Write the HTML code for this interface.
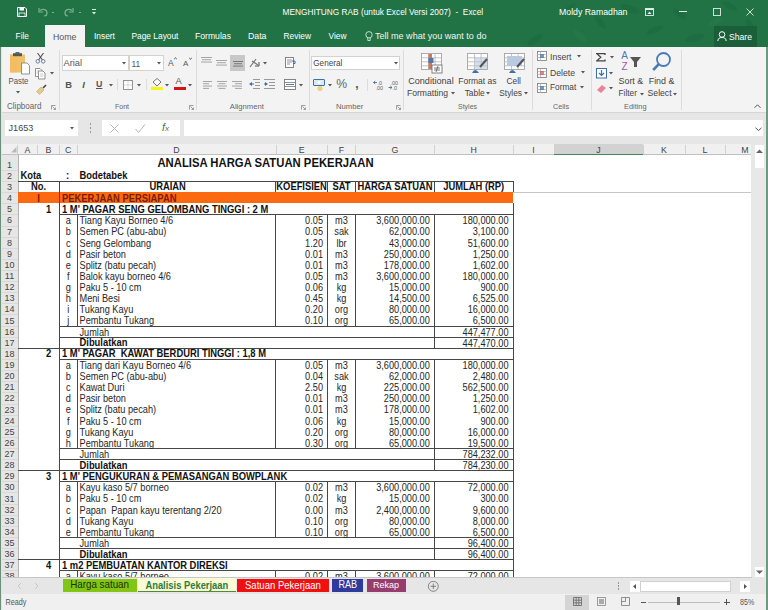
<!DOCTYPE html>
<html><head><meta charset="utf-8">
<style>
*{margin:0;padding:0;box-sizing:border-box}
html,body{width:768px;height:610px;overflow:hidden;background:#fff;font-family:"Liberation Sans",sans-serif}
.a{position:absolute;white-space:nowrap}
.rh{font-size:8.5px;color:#444;text-align:center}
#grid{position:absolute;left:0;top:155px;width:751.4px;height:422px;background:#fff;overflow:hidden}
</style></head><body>
<div class="a" style="left:0px;top:0px;width:768px;height:47px;background:#217346;"></div>
<svg class="a" style="left:480px;top:0" width="288" height="47" viewBox="0 0 288 47"><g fill="#1c6940" opacity="0.55"><ellipse cx="55" cy="40" rx="9" ry="3.5" transform="rotate(-35 55 40)"/><ellipse cx="120" cy="22" rx="8" ry="3" transform="rotate(50 120 22)"/><ellipse cx="150" cy="9" rx="10" ry="3.5" transform="rotate(20 150 9)"/><ellipse cx="175" cy="30" rx="9" ry="3" transform="rotate(-25 175 30)"/><ellipse cx="200" cy="14" rx="8" ry="3" transform="rotate(35 200 14)"/><ellipse cx="215" cy="38" rx="10" ry="3.5" transform="rotate(-15 215 38)"/><ellipse cx="250" cy="6" rx="8" ry="3" transform="rotate(30 250 6)"/><ellipse cx="270" cy="25" rx="7" ry="3" transform="rotate(60 270 25)"/><ellipse cx="90" cy="8" rx="7" ry="2.5" transform="rotate(-40 90 8)"/></g><g fill="#2c8050" opacity="0.35"><ellipse cx="100" cy="36" rx="8" ry="3" transform="rotate(40 100 36)"/><ellipse cx="235" cy="22" rx="8" ry="3" transform="rotate(-30 235 22)"/></g></svg>
<svg class="a" style="left:17px;top:6.8px" width="10" height="10" viewBox="0 0 10 10"><path d="M0.5 0.5H8L9.5 2V9.5H0.5Z" fill="none" stroke="#fff" stroke-width="1"/><rect x="2.5" y="0.5" width="4.5" height="3" fill="#fff"/><rect x="2" y="6" width="6" height="3.5" fill="none" stroke="#fff" stroke-width="0.8"/></svg>
<svg class="a" style="left:38px;top:7px" width="11" height="10" viewBox="0 0 11 10"><path d="M2 3.5C5 1.5 9 2.5 9 6C9 8 7.5 9 6 9" fill="none" stroke="#7fae93" stroke-width="1.2"/><path d="M1 1V5H5" fill="none" stroke="#7fae93" stroke-width="1.2"/></svg>
<div class="a" style="left:52px;top:12px;width:2px;height:1px;background:#7fae93"></div>
<svg class="a" style="left:63px;top:7px" width="11" height="10" viewBox="0 0 11 10"><path d="M9 3.5C6 1.5 2 2.5 2 6C2 8 3.5 9 5 9" fill="none" stroke="#7fae93" stroke-width="1.2"/><path d="M10 1V5H6" fill="none" stroke="#7fae93" stroke-width="1.2"/></svg>
<div class="a" style="left:79px;top:12px;width:2px;height:1px;background:#7fae93"></div>
<svg class="a" style="left:92px;top:9px" width="4" height="6" viewBox="0 0 4 6"><rect x="0" y="0" width="4" height="1" fill="#dfeee5"/><path d="M0 3H4L2 5.5Z" fill="#dfeee5"/></svg>
<div class="a" style="left:282.60px;top:7.45px;font-size:8.3px;line-height:8.3px;color:#fff;letter-spacing:0px;transform-origin:0 0;transform:scaleY(1.15)">MENGHITUNG RAB (untuk Excel Versi 2007)&nbsp; -&nbsp; Excel</div>
<div class="a" style="left:559.00px;top:7.40px;font-size:8.74px;line-height:8.74px;color:#fff;transform-origin:0 0;transform:scaleY(1.1)">Moldy Ramadhan</div>
<svg class="a" style="left:645px;top:7.5px" width="9" height="8" viewBox="0 0 9 8"><rect x="0.5" y="0.5" width="8" height="7" fill="none" stroke="#e8f0eb" stroke-width="0.9"/><rect x="0.5" y="0.5" width="8" height="1.5" fill="#e8f0eb"/><path d="M2.5 6H6.5L4.5 3.5Z" fill="#e8f0eb"/></svg>
<div class="a" style="left:679px;top:11px;width:8px;height:0.9px;background:#e0ebe4;"></div>
<svg class="a" style="left:712.5px;top:7.5px" width="8" height="8" viewBox="0 0 8 8"><rect x="0.5" y="0.5" width="7" height="7" fill="none" stroke="#e0ebe4" stroke-width="0.9"/></svg>
<svg class="a" style="left:746px;top:7.5px" width="8" height="8" viewBox="0 0 8 8"><path d="M0.5 0.5L7.5 7.5M7.5 0.5L0.5 7.5" stroke="#e0ebe4" stroke-width="0.9"/></svg>
<div class="a" style="left:45px;top:25px;width:40px;height:22px;background:#f3f3f3;"></div>
<div class="a" style="left:15.60px;top:31.45px;font-size:8.31px;line-height:8.31px;color:#fff;transform-origin:0 0;transform:scaleY(1.12)">File</div>
<div class="a" style="left:94.00px;top:31.44px;font-size:8.39px;line-height:8.39px;color:#fff;transform-origin:0 0;transform:scaleY(1.12)">Insert</div>
<div class="a" style="left:131.50px;top:31.44px;font-size:8.37px;line-height:8.37px;color:#fff;transform-origin:0 0;transform:scaleY(1.12)">Page Layout</div>
<div class="a" style="left:195.00px;top:31.41px;font-size:8.64px;line-height:8.64px;color:#fff;transform-origin:0 0;transform:scaleY(1.12)">Formulas</div>
<div class="a" style="left:248.00px;top:31.40px;font-size:8.76px;line-height:8.76px;color:#fff;transform-origin:0 0;transform:scaleY(1.12)">Data</div>
<div class="a" style="left:283.50px;top:31.44px;font-size:8.38px;line-height:8.38px;color:#fff;transform-origin:0 0;transform:scaleY(1.12)">Review</div>
<div class="a" style="left:328.50px;top:31.44px;font-size:8.37px;line-height:8.37px;color:#fff;transform-origin:0 0;transform:scaleY(1.12)">View</div>
<div class="a" style="left:53.00px;top:31.59px;font-size:8.81px;line-height:8.81px;color:#555;transform-origin:0 0;transform:scaleY(1.12)">Home</div>
<svg class="a" style="left:365px;top:31px" width="8" height="11" viewBox="0 0 8 11"><circle cx="4" cy="3.8" r="3.2" fill="none" stroke="#f0f5f2" stroke-width="0.8"/><path d="M2.8 7V9.5H5.2V7" fill="none" stroke="#f0f5f2" stroke-width="0.8"/></svg>
<div class="a" style="left:375.00px;top:31.86px;font-size:9.04px;line-height:9.04px;color:#f0f5f2;transform-origin:0 0;transform:scaleY(1.05)">Tell me what you want to do</div>
<div class="a" style="left:714px;top:26px;width:43px;height:21px;background:#1b5e3a;"></div>
<svg class="a" style="left:717px;top:31px" width="10" height="11" viewBox="0 0 10 11"><circle cx="5" cy="3.5" r="2.8" fill="none" stroke="#fff" stroke-width="1"/><path d="M0.8 10C1 7 3 6.5 5 6.5S9 7 9.2 10" fill="none" stroke="#fff" stroke-width="1"/></svg>
<div class="a" style="left:729.00px;top:32.01px;font-size:8.62px;line-height:8.62px;color:#fff;transform-origin:0 0;transform:scaleY(1.1)">Share</div>
<div class="a" style="left:0px;top:47px;width:768px;height:65px;background:#f3f3f3;"></div>
<div class="a" style="left:0px;top:112px;width:768px;height:1px;background:#d5d5d5;"></div>
<div class="a" style="left:58.5px;top:50px;width:1px;height:60px;background:#dcdcdc;"></div>
<div class="a" style="left:195.6px;top:50px;width:1px;height:60px;background:#dcdcdc;"></div>
<div class="a" style="left:308.6px;top:50px;width:1px;height:60px;background:#dcdcdc;"></div>
<div class="a" style="left:403px;top:50px;width:1px;height:60px;background:#dcdcdc;"></div>
<div class="a" style="left:531.5px;top:50px;width:1px;height:60px;background:#dcdcdc;"></div>
<div class="a" style="left:590.6px;top:50px;width:1px;height:60px;background:#dcdcdc;"></div>
<div class="a" style="left:681px;top:50px;width:1px;height:60px;background:#dcdcdc;"></div>
<div class="a" style="left:7.00px;top:102.58px;font-size:8.06px;line-height:8.06px;color:#666;transform-origin:0 0;transform:scaleY(1.05)">Clipboard</div>
<div class="a" style="left:115.00px;top:102.70px;font-size:7.0px;line-height:7.0px;color:#666;transform-origin:0 0;transform:scaleY(1.05)">Font</div>
<div class="a" style="left:229.80px;top:102.62px;font-size:7.65px;line-height:7.65px;color:#666;transform-origin:0 0;transform:scaleY(1.05)">Alignment</div>
<div class="a" style="left:336.00px;top:102.62px;font-size:7.67px;line-height:7.67px;color:#666;transform-origin:0 0;transform:scaleY(1.05)">Number</div>
<div class="a" style="left:458.00px;top:102.70px;font-size:7.0px;line-height:7.0px;color:#666;transform-origin:0 0;transform:scaleY(1.05)">Styles</div>
<div class="a" style="left:553.00px;top:102.68px;font-size:7.2px;line-height:7.2px;color:#666;transform-origin:0 0;transform:scaleY(1.05)">Cells</div>
<div class="a" style="left:624.00px;top:102.66px;font-size:7.36px;line-height:7.36px;color:#666;transform-origin:0 0;transform:scaleY(1.05)">Editing</div>
<svg class="a" style="left:51px;top:105px" width="5" height="5" viewBox="0 0 5 5"><path d="M0.5 0.5H4.5M0.5 0.5V4.5" stroke="#888" stroke-width="0.8" fill="none"/><path d="M1.5 1.5L4.5 4.5M2.5 4.5H4.5V2.5" stroke="#888" stroke-width="0.8" fill="none"/></svg>
<svg class="a" style="left:188.5px;top:105px" width="5" height="5" viewBox="0 0 5 5"><path d="M0.5 0.5H4.5M0.5 0.5V4.5" stroke="#888" stroke-width="0.8" fill="none"/><path d="M1.5 1.5L4.5 4.5M2.5 4.5H4.5V2.5" stroke="#888" stroke-width="0.8" fill="none"/></svg>
<svg class="a" style="left:301px;top:105px" width="5" height="5" viewBox="0 0 5 5"><path d="M0.5 0.5H4.5M0.5 0.5V4.5" stroke="#888" stroke-width="0.8" fill="none"/><path d="M1.5 1.5L4.5 4.5M2.5 4.5H4.5V2.5" stroke="#888" stroke-width="0.8" fill="none"/></svg>
<svg class="a" style="left:395.5px;top:105px" width="5" height="5" viewBox="0 0 5 5"><path d="M0.5 0.5H4.5M0.5 0.5V4.5" stroke="#888" stroke-width="0.8" fill="none"/><path d="M1.5 1.5L4.5 4.5M2.5 4.5H4.5V2.5" stroke="#888" stroke-width="0.8" fill="none"/></svg>
<svg class="a" style="left:10px;top:51.5px" width="20" height="23" viewBox="0 0 20 23"><rect x="0" y="2.5" width="15" height="18" fill="#efc26a"/><rect x="0" y="2.5" width="7" height="18" fill="#f2b95a" opacity="0.6"/><rect x="3" y="1.2" width="9" height="3" fill="#555"/><rect x="5.5" y="0" width="4" height="2" fill="#666"/><path d="M11.5 11H17L19.5 13.5V22H11.5Z" fill="#fff" stroke="#7a7a7a" stroke-width="0.8"/></svg>
<div class="a" style="left:8.50px;top:77.11px;font-size:7.8px;line-height:7.8px;color:#555;transform-origin:0 0;transform:scaleY(1.15)">Paste</div>
<svg class="a" style="left:16px;top:90.5px" width="4" height="3" viewBox="0 0 4 3"><path d="M0 0H4L2 2.5Z" fill="#555"/></svg>
<svg class="a" style="left:34.5px;top:52.5px" width="11" height="11" viewBox="0 0 11 11"><path d="M2.5 0L7.5 7M8.5 0L3.5 7" stroke="#555" stroke-width="1.1"/><circle cx="2.8" cy="8.3" r="1.8" fill="none" stroke="#6a7f99" stroke-width="1"/><circle cx="8.2" cy="8.3" r="1.8" fill="none" stroke="#6a7f99" stroke-width="1"/></svg>
<svg class="a" style="left:35px;top:67.5px" width="11" height="12" viewBox="0 0 11 12"><path d="M0.5 0.5H5L7 2.5V8.5H0.5Z" fill="#fff" stroke="#777" stroke-width="0.8"/><path d="M3.5 3H8L10 5V11H3.5Z" fill="#fff" stroke="#777" stroke-width="0.8"/><path d="M1.5 3H4M1.5 5H3M5 6H8.5M5 8H8.5" stroke="#aaa" stroke-width="0.6"/></svg>
<svg class="a" style="left:49.5px;top:72.0px" width="4" height="3" viewBox="0 0 4 3"><path d="M0 0H4L2 2.5Z" fill="#555"/></svg>
<svg class="a" style="left:35.5px;top:84px" width="12" height="11" viewBox="0 0 12 11"><path d="M7 4L10 1" stroke="#444" stroke-width="1.6"/><path d="M0.5 7.5L5 3L8 6L3.5 10.5Z" fill="#e3cb8a" stroke="#b59a50" stroke-width="0.5"/></svg>
<div class="a" style="left:61.5px;top:55px;width:67px;height:15.5px;background:#fff;border:1px solid #d2d2d2"></div>
<div class="a" style="left:128.5px;top:55px;width:35px;height:15.5px;background:#fff;border:1px solid #d2d2d2"></div>
<div class="a" style="left:63.50px;top:58.94px;font-size:9.3px;line-height:9.3px;color:#555;">Arial</div>
<div class="a" style="left:131.40px;top:59.04px;font-size:8.4px;line-height:8.4px;color:#555;transform-origin:0 0;transform:scaleY(1.08)">11</div>
<svg class="a" style="left:121.5px;top:61.5px" width="4" height="3" viewBox="0 0 4 3"><path d="M0 0H4L2 2.5Z" fill="#555"/></svg>
<svg class="a" style="left:156.5px;top:61.5px" width="4" height="3" viewBox="0 0 4 3"><path d="M0 0H4L2 2.5Z" fill="#555"/></svg>
<div class="a" style="left:168.00px;top:59.03px;font-size:8.5px;line-height:8.5px;color:#555;">A</div>
<svg class="a" style="left:174px;top:57px" width="3" height="3" viewBox="0 0 3 3"><path d="M0 2.5L1.5 0.5L3 2.5" stroke="#555" fill="none" stroke-width="0.8"/></svg>
<div class="a" style="left:183.00px;top:59.58px;font-size:8.0px;line-height:8.0px;color:#555;">A</div>
<svg class="a" style="left:188.5px;top:57px" width="3" height="3" viewBox="0 0 3 3"><path d="M0 0.5L1.5 2.5L3 0.5" stroke="#555" fill="none" stroke-width="0.8"/></svg>
<div class="a" style="left:65.30px;top:80.12px;font-size:9.4px;line-height:9.4px;color:#555;font-weight:bold;">B</div>
<div class="a" style="left:82.30px;top:80.12px;font-size:9.4px;line-height:9.4px;color:#555;font-weight:bold;font-style:italic">I</div>
<div class="a" style="left:96.00px;top:80.19px;font-size:8.8px;line-height:8.8px;color:#555;font-weight:bold;text-decoration:underline">U</div>
<svg class="a" style="left:108.7px;top:83.5px" width="4" height="3" viewBox="0 0 4 3"><path d="M0 0H4L2 2.5Z" fill="#555"/></svg>
<div class="a" style="left:117.3px;top:79px;width:1px;height:11px;background:#dcdcdc;"></div>
<svg class="a" style="left:122.5px;top:79.5px" width="10" height="10" viewBox="0 0 10 10"><rect x="0.5" y="0.5" width="9" height="9" fill="#fff" stroke="#888" stroke-width="0.9"/><path d="M5 0.5V9.5M0.5 5H9.5" stroke="#aaa" stroke-width="0.8" stroke-dasharray="1 1"/></svg>
<svg class="a" style="left:137px;top:83.5px" width="4" height="3" viewBox="0 0 4 3"><path d="M0 0H4L2 2.5Z" fill="#555"/></svg>
<div class="a" style="left:145.6px;top:79px;width:1px;height:11px;background:#dcdcdc;"></div>
<svg class="a" style="left:150.5px;top:78px" width="12" height="12" viewBox="0 0 12 12"><path d="M2 4L6 0.5L10 4L6 8Z" fill="#fff" stroke="#666" stroke-width="0.9"/><rect x="0" y="9" width="12" height="3" fill="#f5f51a"/></svg>
<svg class="a" style="left:165.3px;top:83.5px" width="4" height="3" viewBox="0 0 4 3"><path d="M0 0H4L2 2.5Z" fill="#555"/></svg>
<div class="a" style="left:175.50px;top:77.45px;font-size:9.2px;line-height:9.2px;color:#555;">A</div>
<div class="a" style="left:174px;top:87px;width:11.5px;height:3px;background:#d11616;"></div>
<svg class="a" style="left:188px;top:83.5px" width="4" height="3" viewBox="0 0 4 3"><path d="M0 0H4L2 2.5Z" fill="#555"/></svg>
<div class="a" style="left:230px;top:55.3px;width:15px;height:15.3px;background:#c8c8c8;"></div>
<svg class="a" style="left:201px;top:56.5px" width="14" height="14" viewBox="0 0 14 14"><rect x="0" y="0" width="11" height="0.9" fill="#9c9c9c"/><rect x="1" y="2.3" width="9" height="0.9" fill="#9c9c9c"/><rect x="0" y="4.6" width="11" height="0.9" fill="#9c9c9c"/></svg>
<svg class="a" style="left:216px;top:59.5px" width="14" height="14" viewBox="0 0 14 14"><rect x="0" y="0" width="11" height="0.9" fill="#9c9c9c"/><rect x="1" y="2.3" width="9" height="0.9" fill="#9c9c9c"/><rect x="0" y="4.6" width="11" height="0.9" fill="#9c9c9c"/></svg>
<svg class="a" style="left:232.5px;top:61px" width="14" height="14" viewBox="0 0 14 14"><rect x="0" y="0" width="10" height="0.9" fill="#707070"/><rect x="1" y="2.3" width="8" height="0.9" fill="#707070"/><rect x="0" y="4.6" width="10" height="0.9" fill="#707070"/></svg>
<svg class="a" style="left:202.5px;top:80.5px" width="14" height="14" viewBox="0 0 14 14"><rect x="0" y="0" width="9" height="0.9" fill="#9c9c9c"/><rect x="0" y="2.3" width="6" height="0.9" fill="#9c9c9c"/><rect x="0" y="4.6" width="9" height="0.9" fill="#9c9c9c"/><rect x="0" y="6.9" width="6" height="0.9" fill="#9c9c9c"/></svg>
<svg class="a" style="left:217px;top:80.5px" width="14" height="14" viewBox="0 0 14 14"><rect x="0" y="0" width="10" height="0.9" fill="#9c9c9c"/><rect x="1.5" y="2.3" width="7" height="0.9" fill="#9c9c9c"/><rect x="0" y="4.6" width="10" height="0.9" fill="#9c9c9c"/><rect x="1.5" y="6.9" width="7" height="0.9" fill="#9c9c9c"/></svg>
<svg class="a" style="left:232px;top:80.5px" width="14" height="14" viewBox="0 0 14 14"><rect x="0" y="0" width="10" height="0.9" fill="#9c9c9c"/><rect x="3" y="2.3" width="7" height="0.9" fill="#9c9c9c"/><rect x="0" y="4.6" width="10" height="0.9" fill="#9c9c9c"/><rect x="3" y="6.9" width="7" height="0.9" fill="#9c9c9c"/></svg>
<svg class="a" style="left:248.5px;top:58px" width="11" height="10" viewBox="0 0 11 10"><path d="M1 9L7 1M3 3L9 7" stroke="#777" stroke-width="1.2"/><path d="M6 8L10 8L10 4" stroke="#555" fill="none" stroke-width="1"/></svg>
<svg class="a" style="left:262.6px;top:61.5px" width="4" height="3" viewBox="0 0 4 3"><path d="M0 0H4L2 2.5Z" fill="#555"/></svg>
<svg class="a" style="left:284.6px;top:57px" width="11" height="11" viewBox="0 0 11 11"><rect x="0.5" y="0.5" width="8" height="10" fill="#fff" stroke="#777" stroke-width="0.9"/><path d="M2 3H7M2 5H7M2 7H5" stroke="#777" stroke-width="0.8"/><path d="M7 4H10V6.5H8" stroke="#3f6fa8" fill="none" stroke-width="1"/></svg>
<svg class="a" style="left:248.5px;top:79px" width="11" height="10" viewBox="0 0 11 10"><rect x="4" y="0" width="7" height="1" fill="#999"/><rect x="6" y="3" width="5" height="1" fill="#999"/><rect x="6" y="6" width="5" height="1" fill="#999"/><rect x="4" y="9" width="7" height="1" fill="#999"/><path d="M0 5L3 3V7Z" fill="#3f6fa8"/><rect x="2" y="4.5" width="3" height="1" fill="#3f6fa8"/></svg>
<svg class="a" style="left:263.7px;top:79px" width="11" height="10" viewBox="0 0 11 10"><rect x="0" y="0" width="11" height="1" fill="#999"/><rect x="5" y="3" width="6" height="1" fill="#999"/><rect x="5" y="6" width="6" height="1" fill="#999"/><rect x="0" y="9" width="11" height="1" fill="#999"/><path d="M4 5L1 3V7Z" fill="#3f6fa8"/><rect x="0" y="4.5" width="2" height="1" fill="#3f6fa8"/></svg>
<svg class="a" style="left:284px;top:78.5px" width="12" height="11" viewBox="0 0 12 11"><rect x="0.5" y="0.5" width="11" height="10" fill="#fff" stroke="#777" stroke-width="0.9"/><path d="M0.5 3.5H11.5M0.5 7.5H11.5" stroke="#777" stroke-width="0.8"/><path d="M2 5.5H10" stroke="#3f6fa8" stroke-width="0.9"/></svg>
<svg class="a" style="left:299px;top:83.5px" width="4" height="3" viewBox="0 0 4 3"><path d="M0 0H4L2 2.5Z" fill="#555"/></svg>
<div class="a" style="left:311.3px;top:55.7px;width:89px;height:14.5px;background:#fff;border:1px solid #d2d2d2"></div>
<div class="a" style="left:313.30px;top:59.07px;font-size:8.15px;line-height:8.15px;color:#444;transform-origin:0 0;transform:scaleY(1.12)">General</div>
<svg class="a" style="left:393.5px;top:61.5px" width="4" height="3" viewBox="0 0 4 3"><path d="M0 0H4L2 2.5Z" fill="#555"/></svg>
<svg class="a" style="left:313px;top:79px" width="12" height="12" viewBox="0 0 12 12"><rect x="0.5" y="0.5" width="11" height="6" rx="0.5" fill="#dfe8f3" stroke="#3f6fa8" stroke-width="1"/><circle cx="6" cy="3.5" r="1.6" fill="#fff"/><circle cx="7" cy="9.5" r="2.6" fill="#ecd08a"/></svg>
<svg class="a" style="left:327.7px;top:83.5px" width="4" height="3" viewBox="0 0 4 3"><path d="M0 0H4L2 2.5Z" fill="#555"/></svg>
<div class="a" style="left:336.20px;top:78.20px;font-size:12.2px;line-height:12.2px;color:#666;">%</div>
<div class="a" style="left:355.20px;top:77.63px;font-size:12px;line-height:12px;color:#555;font-weight:bold;">,</div>
<div class="a" style="left:367.2px;top:79px;width:1px;height:12px;background:#dcdcdc;"></div>
<svg class="a" style="left:372.6px;top:79.5px" width="11" height="11" viewBox="0 0 11 11"><path d="M0.5 2.5H4M0.5 2.5L2.2 1M0.5 2.5L2.2 4" stroke="#3f6fa8" stroke-width="0.9" fill="none"/><text x="4.5" y="4.8" font-size="5.5" font-family="Liberation Sans" fill="#666">.0</text><text x="2.5" y="10" font-size="5.5" font-family="Liberation Sans" fill="#666">.00</text></svg>
<svg class="a" style="left:388.3px;top:79.5px" width="11" height="11" viewBox="0 0 11 11"><text x="2.5" y="4.8" font-size="5.5" font-family="Liberation Sans" fill="#666">.00</text><path d="M0.5 7.5H4M4 7.5L2.3 6M4 7.5L2.3 9" stroke="#3f6fa8" stroke-width="0.9" fill="none"/><text x="4.5" y="10" font-size="5.5" font-family="Liberation Sans" fill="#666">.0</text></svg>
<svg class="a" style="left:421px;top:53px" width="22" height="21" viewBox="0 0 22 21"><rect x="0.5" y="0.5" width="20" height="16" fill="#fff" stroke="#9a9a9a" stroke-width="0.8"/><rect x="0.5" y="4.5" width="20" height="0.7" fill="#aaa"/><rect x="0.5" y="8.5" width="20" height="0.7" fill="#aaa"/><rect x="0.5" y="12.5" width="20" height="0.7" fill="#aaa"/><rect x="7.1" y="0.5" width="0.7" height="16" fill="#aaa"/><rect x="13.7" y="0.5" width="0.7" height="16" fill="#aaa"/><rect x="7.5" y="1" width="3.5" height="15" fill="#c87a5a"/><rect x="7.5" y="5" width="5" height="5" fill="#4f78b0"/><rect x="11" y="12" width="10" height="8" fill="#fff" stroke="#777" stroke-width="0.9"/><path d="M13 15H19M13 17H19M17 13L15 19" stroke="#555" stroke-width="0.8"/></svg>
<svg class="a" style="left:467.4px;top:53px" width="22" height="21" viewBox="0 0 22 21"><rect x="0.5" y="0.5" width="20" height="16" fill="#fff" stroke="#9a9a9a" stroke-width="0.8"/><rect x="0.5" y="4.5" width="20" height="0.7" fill="#aaa"/><rect x="0.5" y="8.5" width="20" height="0.7" fill="#aaa"/><rect x="0.5" y="12.5" width="20" height="0.7" fill="#aaa"/><rect x="7.1" y="0.5" width="0.7" height="16" fill="#aaa"/><rect x="13.7" y="0.5" width="0.7" height="16" fill="#aaa"/><rect x="7" y="5" width="13" height="11" fill="#b8c9e0" opacity="0.6"/><path d="M5 20Q8 14 12 20Z" fill="#3f6fa8"/><path d="M13 14L20 6" stroke="#555" stroke-width="2"/></svg>
<svg class="a" style="left:503.5px;top:53px" width="22" height="21" viewBox="0 0 22 21"><rect x="0.5" y="0.5" width="20" height="16" fill="#fff" stroke="#9a9a9a" stroke-width="0.8"/><rect x="0.5" y="4.5" width="20" height="0.7" fill="#aaa"/><rect x="0.5" y="8.5" width="20" height="0.7" fill="#aaa"/><rect x="0.5" y="12.5" width="20" height="0.7" fill="#aaa"/><rect x="7.1" y="0.5" width="0.7" height="16" fill="#aaa"/><rect x="13.7" y="0.5" width="0.7" height="16" fill="#aaa"/><rect x="3" y="3" width="15" height="10" fill="#b8c9e0"/><path d="M5 20Q8 14 12 20Z" fill="#3f6fa8"/><path d="M13 14L20 6" stroke="#555" stroke-width="2"/></svg>
<div class="a" style="left:408.20px;top:76.96px;font-size:9.1px;line-height:9.1px;color:#444;transform-origin:0 0;transform:scaleY(1.0)">Conditional</div>
<div class="a" style="left:407.00px;top:88.72px;font-size:8.58px;line-height:8.58px;color:#444;">Formatting</div>
<svg class="a" style="left:451px;top:92.0px" width="4" height="3" viewBox="0 0 4 3"><path d="M0 0H4L2 2.5Z" fill="#555"/></svg>
<div class="a" style="left:458.30px;top:77.03px;font-size:8.49px;line-height:8.49px;color:#444;">Format as</div>
<div class="a" style="left:464.70px;top:88.74px;font-size:8.37px;line-height:8.37px;color:#444;">Table</div>
<svg class="a" style="left:486px;top:92.0px" width="4" height="3" viewBox="0 0 4 3"><path d="M0 0H4L2 2.5Z" fill="#555"/></svg>
<div class="a" style="left:506.60px;top:77.04px;font-size:8.36px;line-height:8.36px;color:#444;">Cell</div>
<div class="a" style="left:499.30px;top:88.75px;font-size:8.3px;line-height:8.3px;color:#444;">Styles</div>
<svg class="a" style="left:523.5px;top:92.0px" width="4" height="3" viewBox="0 0 4 3"><path d="M0 0H4L2 2.5Z" fill="#555"/></svg>
<svg class="a" style="left:537px;top:51.4px" width="11" height="10" viewBox="0 0 11 10"><rect x="0.5" y="0.5" width="9" height="9" fill="#fff" stroke="#888" stroke-width="0.9"/><path d="M0.5 3.5H9.5M0.5 6.5H9.5M3.5 0.5V9.5" stroke="#aaa" stroke-width="0.7"/><rect x="3" y="3" width="4" height="4" fill="#3f6fa8" opacity="0.7"/></svg>
<div class="a" style="left:550.00px;top:52.02px;font-size:8.59px;line-height:8.59px;color:#444;transform-origin:0 0;transform:scaleY(1.1)">Insert</div>
<svg class="a" style="left:576.8px;top:54.9px" width="4" height="3" viewBox="0 0 4 3"><path d="M0 0H4L2 2.5Z" fill="#555"/></svg>
<svg class="a" style="left:537px;top:67.5px" width="11" height="10" viewBox="0 0 11 10"><rect x="0.5" y="0.5" width="9" height="9" fill="#fff" stroke="#888" stroke-width="0.9"/><path d="M0.5 3.5H9.5M0.5 6.5H9.5M3.5 0.5V9.5" stroke="#aaa" stroke-width="0.7"/><rect x="3" y="3" width="4" height="4" fill="#d9534f" opacity="0.7"/></svg>
<div class="a" style="left:550.00px;top:68.11px;font-size:8.68px;line-height:8.68px;color:#444;transform-origin:0 0;transform:scaleY(1.1)">Delete</div>
<svg class="a" style="left:581px;top:71.0px" width="4" height="3" viewBox="0 0 4 3"><path d="M0 0H4L2 2.5Z" fill="#555"/></svg>
<svg class="a" style="left:537px;top:82.6px" width="11" height="10" viewBox="0 0 11 10"><rect x="0.5" y="0.5" width="9" height="9" fill="#fff" stroke="#888" stroke-width="0.9"/><path d="M0.5 3.5H9.5M0.5 6.5H9.5M3.5 0.5V9.5" stroke="#aaa" stroke-width="0.7"/><rect x="3" y="3" width="4" height="4" fill="#3f6fa8" opacity="0.7"/></svg>
<div class="a" style="left:550.00px;top:83.25px;font-size:8.27px;line-height:8.27px;color:#444;transform-origin:0 0;transform:scaleY(1.1)">Format</div>
<svg class="a" style="left:580px;top:86.1px" width="4" height="3" viewBox="0 0 4 3"><path d="M0 0H4L2 2.5Z" fill="#555"/></svg>
<svg class="a" style="left:596px;top:53.3px" width="10" height="9" viewBox="0 0 10 9"><path d="M9 2V0.7H0.8L4.8 4.2L0.8 7.8H9V6.5" stroke="#444" stroke-width="1.3" fill="none"/></svg>
<svg class="a" style="left:610px;top:56.0px" width="4" height="3" viewBox="0 0 4 3"><path d="M0 0H4L2 2.5Z" fill="#555"/></svg>
<svg class="a" style="left:595.5px;top:67.5px" width="11" height="11" viewBox="0 0 11 11"><rect x="0.5" y="0.5" width="10" height="9.5" fill="#fff" stroke="#3f6fa8" stroke-width="1"/><path d="M5.5 2V7M3 5L5.5 7.5L8 5" stroke="#3f6fa8" stroke-width="1.2" fill="none"/></svg>
<svg class="a" style="left:609px;top:71.5px" width="4" height="3" viewBox="0 0 4 3"><path d="M0 0H4L2 2.5Z" fill="#555"/></svg>
<svg class="a" style="left:596px;top:82.6px" width="11" height="11" viewBox="0 0 11 11"><path d="M1 7L6 2L10 5L5 10Z" fill="#e8849a"/></svg>
<svg class="a" style="left:609px;top:86.5px" width="4" height="3" viewBox="0 0 4 3"><path d="M0 0H4L2 2.5Z" fill="#555"/></svg>
<div class="a" style="left:621.30px;top:51.15px;font-size:10px;line-height:10px;color:#4a7ab5;">A</div>
<div class="a" style="left:621.50px;top:62.05px;font-size:10px;line-height:10px;color:#9b5aa8;">Z</div>
<svg class="a" style="left:630.4px;top:56.7px" width="11" height="10" viewBox="0 0 11 10"><path d="M0 0H11L7 5V10H4V5Z" fill="#555"/></svg>
<svg class="a" style="left:651.5px;top:52px" width="19" height="19" viewBox="0 0 19 19"><circle cx="11.5" cy="7.5" r="6.5" fill="none" stroke="#4a7ab5" stroke-width="1.8"/><path d="M6.8 12.2L1.2 18" stroke="#4a7ab5" stroke-width="2.6"/></svg>
<div class="a" style="left:618.50px;top:76.98px;font-size:8.92px;line-height:8.92px;color:#444;">Sort &amp;</div>
<div class="a" style="left:618.50px;top:89.05px;font-size:8.3px;line-height:8.3px;color:#444;">Filter</div>
<svg class="a" style="left:640px;top:92.5px" width="4" height="3" viewBox="0 0 4 3"><path d="M0 0H4L2 2.5Z" fill="#555"/></svg>
<div class="a" style="left:648.70px;top:76.98px;font-size:8.93px;line-height:8.93px;color:#444;">Find &amp;</div>
<div class="a" style="left:647.60px;top:89.01px;font-size:8.63px;line-height:8.63px;color:#444;">Select</div>
<svg class="a" style="left:672.5px;top:92.5px" width="4" height="3" viewBox="0 0 4 3"><path d="M0 0H4L2 2.5Z" fill="#555"/></svg>
<svg class="a" style="left:754px;top:103.8px" width="7" height="5" viewBox="0 0 7 5"><path d="M0.5 3.8L3.5 0.8L6.5 3.8" stroke="#555" fill="none" stroke-width="1"/></svg>
<div class="a" style="left:0px;top:113px;width:768px;height:31px;background:#e6e6e6;"></div>
<div class="a" style="left:5.2px;top:119.7px;width:73px;height:16px;background:#fff;"></div>
<div class="a" style="left:8.60px;top:124.46px;font-size:9.06px;line-height:9.06px;color:#444;">J1653</div>
<svg class="a" style="left:69.6px;top:126.5px" width="4" height="3" viewBox="0 0 4 3"><path d="M0 0H4L2 2.5Z" fill="#555"/></svg>
<div class="a" style="left:89.5px;top:123px;width:1px;height:1.5px;background:#999;"></div>
<div class="a" style="left:89.5px;top:127px;width:1px;height:1.5px;background:#999;"></div>
<div class="a" style="left:89.5px;top:131px;width:1px;height:1.5px;background:#999;"></div>
<div class="a" style="left:101.6px;top:119.7px;width:78px;height:16px;background:#fff;"></div>
<svg class="a" style="left:109.5px;top:124px" width="9" height="9" viewBox="0 0 9 9"><path d="M0.5 0.5L8.5 8.5M8.5 0.5L0.5 8.5" stroke="#b5b5b5" stroke-width="1"/></svg>
<svg class="a" style="left:135.4px;top:124px" width="11" height="9" viewBox="0 0 11 9"><path d="M0.5 5L3.5 8.5L10 0.5" stroke="#b5b5b5" stroke-width="1" fill="none"/></svg>
<div class="a" style="left:162.00px;top:122.24px;font-size:11px;line-height:11px;color:#666;font-family:"Liberation Serif",serif"><i>f<span style="font-size:8px">x</span></i></div>
<div class="a" style="left:183.6px;top:119.7px;width:579px;height:16px;background:#fff;"></div>
<svg class="a" style="left:754.5px;top:126.5px" width="7" height="5" viewBox="0 0 7 5"><path d="M0.5 0.8L3.5 3.5L6.5 0.8" stroke="#555" fill="none" stroke-width="1"/></svg>
<div class="a" style="left:1.5px;top:144px;width:750px;height:10.5px;background:#f0f0f0;"></div>
<div class="a" style="left:1.5px;top:154.3px;width:750px;height:1px;background:#c0c0c0;"></div>
<svg class="a" style="left:10.5px;top:146.8px" width="6" height="6" viewBox="0 0 6 6"><path d="M5.5 0V5.5H0Z" fill="#b9b9b9"/></svg>
<div class="a" style="left:554px;top:144px;width:89px;height:10.5px;background:#d2d2d2;"></div>
<div class="a" style="left:554px;top:153.6px;width:89px;height:1.2px;background:#3f8a5c;"></div>
<div class="a" style="left:37.0px;top:145px;width:1px;height:9px;background:#d0d0d0;"></div>
<div class="a" style="left:-32.50px;width:120px;text-align:center;top:145.19px;font-size:8.8px;line-height:8.8px;color:#444;transform-origin:50% 0;transform:scaleY(1.08)">A</div>
<div class="a" style="left:59.0px;top:145px;width:1px;height:9px;background:#d0d0d0;"></div>
<div class="a" style="left:-11.50px;width:120px;text-align:center;top:145.19px;font-size:8.8px;line-height:8.8px;color:#444;transform-origin:50% 0;transform:scaleY(1.08)">B</div>
<div class="a" style="left:76.5px;top:145px;width:1px;height:9px;background:#d0d0d0;"></div>
<div class="a" style="left:8.25px;width:120px;text-align:center;top:145.19px;font-size:8.8px;line-height:8.8px;color:#444;transform-origin:50% 0;transform:scaleY(1.08)">C</div>
<div class="a" style="left:275.5px;top:145px;width:1px;height:9px;background:#d0d0d0;"></div>
<div class="a" style="left:116.50px;width:120px;text-align:center;top:145.19px;font-size:8.8px;line-height:8.8px;color:#444;transform-origin:50% 0;transform:scaleY(1.08)">D</div>
<div class="a" style="left:327.0px;top:145px;width:1px;height:9px;background:#d0d0d0;"></div>
<div class="a" style="left:241.75px;width:120px;text-align:center;top:145.19px;font-size:8.8px;line-height:8.8px;color:#444;transform-origin:50% 0;transform:scaleY(1.08)">E</div>
<div class="a" style="left:355.0px;top:145px;width:1px;height:9px;background:#d0d0d0;"></div>
<div class="a" style="left:281.50px;width:120px;text-align:center;top:145.19px;font-size:8.8px;line-height:8.8px;color:#444;transform-origin:50% 0;transform:scaleY(1.08)">F</div>
<div class="a" style="left:434.0px;top:145px;width:1px;height:9px;background:#d0d0d0;"></div>
<div class="a" style="left:335.00px;width:120px;text-align:center;top:145.19px;font-size:8.8px;line-height:8.8px;color:#444;transform-origin:50% 0;transform:scaleY(1.08)">G</div>
<div class="a" style="left:512.5px;top:145px;width:1px;height:9px;background:#d0d0d0;"></div>
<div class="a" style="left:413.75px;width:120px;text-align:center;top:145.19px;font-size:8.8px;line-height:8.8px;color:#444;transform-origin:50% 0;transform:scaleY(1.08)">H</div>
<div class="a" style="left:553.5px;top:145px;width:1px;height:9px;background:#d0d0d0;"></div>
<div class="a" style="left:473.50px;width:120px;text-align:center;top:145.19px;font-size:8.8px;line-height:8.8px;color:#444;transform-origin:50% 0;transform:scaleY(1.08)">I</div>
<div class="a" style="left:642.5px;top:145px;width:1px;height:9px;background:#d0d0d0;"></div>
<div class="a" style="left:538.50px;width:120px;text-align:center;top:145.19px;font-size:8.8px;line-height:8.8px;color:#444;transform-origin:50% 0;transform:scaleY(1.08)">J</div>
<div class="a" style="left:684.5px;top:145px;width:1px;height:9px;background:#d0d0d0;"></div>
<div class="a" style="left:604.00px;width:120px;text-align:center;top:145.19px;font-size:8.8px;line-height:8.8px;color:#444;transform-origin:50% 0;transform:scaleY(1.08)">K</div>
<div class="a" style="left:724.5px;top:145px;width:1px;height:9px;background:#d0d0d0;"></div>
<div class="a" style="left:645.00px;width:120px;text-align:center;top:145.19px;font-size:8.8px;line-height:8.8px;color:#444;transform-origin:50% 0;transform:scaleY(1.08)">L</div>
<div class="a" style="left:764.5px;top:145px;width:1px;height:9px;background:#d0d0d0;"></div>
<div class="a" style="left:685.00px;width:120px;text-align:center;top:145.19px;font-size:8.8px;line-height:8.8px;color:#444;transform-origin:50% 0;transform:scaleY(1.08)">M</div>
<div class="a" style="left:17px;top:145px;width:1px;height:9px;background:#d0d0d0;"></div>
<div class="a" style="left:751.4px;top:144px;width:14.6px;height:433px;background:#e8e8e8;"></div>
<div class="a" style="left:754.6px;top:145.4px;width:9.4px;height:10.6px;background:#fff;"></div>
<svg class="a" style="left:755.8px;top:148.5px" width="7" height="5" viewBox="0 0 7 5"><path d="M0 4H7L3.5 0.5Z" fill="#666"/></svg>
<div class="a" style="left:754.6px;top:156.4px;width:9.4px;height:11.6px;background:#fff;"></div>
<div class="a" style="left:754.6px;top:566.5px;width:9.4px;height:10px;background:#fff;"></div>
<svg class="a" style="left:755.8px;top:569.5px" width="7" height="5" viewBox="0 0 7 5"><path d="M0 0.5H7L3.5 4Z" fill="#666"/></svg>
<div class="a" style="left:1.5px;top:577px;width:765px;height:17px;background:#e6e6e6;"></div>
<div class="a" style="left:1.5px;top:577px;width:750px;height:0.8px;background:#c6c6c6;"></div>
<svg class="a" style="left:18px;top:582.5px" width="4" height="7" viewBox="0 0 4 7"><path d="M3 0L0 3L3 6" stroke="#c4c4c4" fill="none" stroke-width="0.9"/></svg>
<svg class="a" style="left:34.5px;top:582.5px" width="4" height="7" viewBox="0 0 4 7"><path d="M0 0L3 3L0 6" stroke="#c4c4c4" fill="none" stroke-width="0.9"/></svg>
<div class="a" style="left:62.6px;top:578.7px;width:74.6px;height:12.9px;background:#84c414;"></div>
<div class="a" style="left:70.20px;top:579.68px;font-size:9.8px;line-height:9.8px;color:#1a3300;transform-origin:0 0;transform:scaleY(1.05)">Harga satuan</div>
<div class="a" style="left:137.8px;top:577.5px;width:98.5px;height:14px;background:#fbfbd6;"></div>
<div class="a" style="left:137.8px;top:590.5px;width:98.5px;height:1.5px;background:#4d8a3d;"></div>
<div class="a" style="left:145.40px;top:579.92px;font-size:9.39px;line-height:9.39px;color:#2e7a3c;font-weight:bold;transform-origin:0 0;transform:scaleY(1.1)">Analisis Pekerjaan</div>
<div class="a" style="left:236.6px;top:579px;width:92.2px;height:12.6px;background:#ee1111;"></div>
<div class="a" style="left:245.00px;top:580.41px;font-size:9.56px;line-height:9.56px;color:#fff;transform-origin:0 0;transform:scaleY(1.1)">Satuan Pekerjaan</div>
<div class="a" style="left:332.4px;top:579px;width:30.8px;height:12.6px;background:#2e3a9c;"></div>
<div class="a" style="left:338.40px;top:580.45px;font-size:9.14px;line-height:9.14px;color:#fff;transform-origin:0 0;transform:scaleY(1.1)">RAB</div>
<div class="a" style="left:366.8px;top:579px;width:39.2px;height:12.6px;background:#963d6e;"></div>
<div class="a" style="left:373.00px;top:580.47px;font-size:8.99px;line-height:8.99px;color:#fff;transform-origin:0 0;transform:scaleY(1.1)">Rekap</div>
<svg class="a" style="left:427px;top:580.5px" width="13" height="11" viewBox="0 0 13 11"><circle cx="6.3" cy="5.3" r="5" fill="none" stroke="#777" stroke-width="0.9"/><path d="M6.3 2.5V8M3.5 5.3H9" stroke="#777" stroke-width="0.9"/></svg>
<div class="a" style="left:618.3px;top:582px;width:1px;height:1.5px;background:#999;"></div>
<div class="a" style="left:618.3px;top:585px;width:1px;height:1.5px;background:#999;"></div>
<div class="a" style="left:618.3px;top:588px;width:1px;height:1.5px;background:#999;"></div>
<div class="a" style="left:629.5px;top:580.5px;width:10px;height:11.5px;background:#fff;"></div>
<svg class="a" style="left:633px;top:583.5px" width="3" height="5" viewBox="0 0 3 5"><path d="M3 0L0 2.5L3 5Z" fill="#555"/></svg>
<div class="a" style="left:639.5px;top:580.5px;width:91px;height:11.5px;background:#fff;border:0.5px solid #d0d0d0"></div>
<div class="a" style="left:740px;top:580.5px;width:10px;height:11.5px;background:#fff;"></div>
<svg class="a" style="left:744px;top:583.5px" width="3" height="5" viewBox="0 0 3 5"><path d="M0 0L3 2.5L0 5Z" fill="#555"/></svg>
<div class="a" style="left:1.5px;top:594px;width:765px;height:16px;background:#f0f0f0;"></div>
<div class="a" style="left:5.60px;top:598.88px;font-size:7.16px;line-height:7.16px;color:#555;transform-origin:0 0;transform:scaleY(1.15)">Ready</div>
<div class="a" style="left:565px;top:594.5px;width:24px;height:15.5px;background:#d4d4d4;"></div>
<svg class="a" style="left:572.5px;top:597px" width="9" height="9" viewBox="0 0 9 9"><path d="M0.5 0.5H8.5V8.5H0.5ZM3.2 0.5V8.5M5.8 0.5V8.5M0.5 3.2H8.5M0.5 5.8H8.5" stroke="#666" fill="none" stroke-width="0.8"/></svg>
<svg class="a" style="left:596.5px;top:597px" width="9" height="9" viewBox="0 0 9 9"><rect x="0.5" y="0.5" width="8" height="8" fill="none" stroke="#888" stroke-width="0.8"/><rect x="2" y="2" width="5" height="5" fill="#aaa"/></svg>
<svg class="a" style="left:620.8px;top:597px" width="9" height="9" viewBox="0 0 9 9"><path d="M0.5 0.5H8.5V8.5H0.5ZM0.5 4.5H4.5V0.5" stroke="#777" fill="none" stroke-width="0.8"/></svg>
<div class="a" style="left:640.5px;top:601.5px;width:5.5px;height:1px;background:#555;"></div>
<div class="a" style="left:648px;top:601.5px;width:72px;height:1px;background:#bdbdbd;"></div>
<div class="a" style="left:677px;top:597px;width:3px;height:8px;background:#555;"></div>
<div class="a" style="left:723.6px;top:601.5px;width:6.5px;height:1px;background:#555;"></div>
<div class="a" style="left:726.3px;top:598.8px;width:1px;height:6.5px;background:#555;"></div>
<div class="a" style="left:740.00px;top:598.88px;font-size:7.14px;line-height:7.14px;color:#555;transform-origin:0 0;transform:scaleY(1.15)">85%</div>
<div class="a" style="left:765.6px;top:47px;width:2.4px;height:563px;background:#6e9a7e;"></div>
<div id="grid">
<div class="a" style="left:1.5px;top:0;width:16px;height:422px;background:#e6e6e6"></div>
<div class="a" style="left:17.6px;top:0;width:1px;height:422px;background:#b4b4b4"></div>
<div class="a rh" style="left:1.5px;top:5.80px;width:16px;height:9.0px;line-height:9.0px;font-size:9.0px;transform-origin:0 7.47px;transform:scaleY(1.0)">1</div>
<div class="a" style="left:1.5px;top:15px;width:16px;height:1px;background:#d8d8d8"></div>
<div class="a rh" style="left:1.5px;top:16.93px;width:16px;height:9.0px;line-height:9.0px;font-size:9.0px;transform-origin:0 7.47px;transform:scaleY(1.0)">2</div>
<div class="a" style="left:1.5px;top:26px;width:16px;height:1px;background:#d8d8d8"></div>
<div class="a rh" style="left:1.5px;top:28.05px;width:16px;height:9.0px;line-height:9.0px;font-size:9.0px;transform-origin:0 7.47px;transform:scaleY(1.0)">3</div>
<div class="a" style="left:1.5px;top:37px;width:16px;height:1px;background:#d8d8d8"></div>
<div class="a rh" style="left:1.5px;top:39.18px;width:16px;height:9.0px;line-height:9.0px;font-size:9.0px;transform-origin:0 7.47px;transform:scaleY(1.0)">4</div>
<div class="a" style="left:1.5px;top:48px;width:16px;height:1px;background:#d8d8d8"></div>
<div class="a rh" style="left:1.5px;top:50.30px;width:16px;height:9.0px;line-height:9.0px;font-size:9.0px;transform-origin:0 7.47px;transform:scaleY(1.0)">5</div>
<div class="a" style="left:1.5px;top:59px;width:16px;height:1px;background:#d8d8d8"></div>
<div class="a rh" style="left:1.5px;top:61.43px;width:16px;height:9.0px;line-height:9.0px;font-size:9.0px;transform-origin:0 7.47px;transform:scaleY(1.0)">6</div>
<div class="a" style="left:1.5px;top:71px;width:16px;height:1px;background:#d8d8d8"></div>
<div class="a rh" style="left:1.5px;top:72.55px;width:16px;height:9.0px;line-height:9.0px;font-size:9.0px;transform-origin:0 7.47px;transform:scaleY(1.0)">7</div>
<div class="a" style="left:1.5px;top:82px;width:16px;height:1px;background:#d8d8d8"></div>
<div class="a rh" style="left:1.5px;top:83.68px;width:16px;height:9.0px;line-height:9.0px;font-size:9.0px;transform-origin:0 7.47px;transform:scaleY(1.0)">8</div>
<div class="a" style="left:1.5px;top:93px;width:16px;height:1px;background:#d8d8d8"></div>
<div class="a rh" style="left:1.5px;top:94.80px;width:16px;height:9.0px;line-height:9.0px;font-size:9.0px;transform-origin:0 7.47px;transform:scaleY(1.0)">9</div>
<div class="a" style="left:1.5px;top:104px;width:16px;height:1px;background:#d8d8d8"></div>
<div class="a rh" style="left:1.5px;top:105.93px;width:16px;height:9.0px;line-height:9.0px;font-size:9.0px;transform-origin:0 7.47px;transform:scaleY(1.0)">10</div>
<div class="a" style="left:1.5px;top:115px;width:16px;height:1px;background:#d8d8d8"></div>
<div class="a rh" style="left:1.5px;top:117.05px;width:16px;height:9.0px;line-height:9.0px;font-size:9.0px;transform-origin:0 7.47px;transform:scaleY(1.0)">11</div>
<div class="a" style="left:1.5px;top:126px;width:16px;height:1px;background:#d8d8d8"></div>
<div class="a rh" style="left:1.5px;top:128.18px;width:16px;height:9.0px;line-height:9.0px;font-size:9.0px;transform-origin:0 7.47px;transform:scaleY(1.0)">12</div>
<div class="a" style="left:1.5px;top:137px;width:16px;height:1px;background:#d8d8d8"></div>
<div class="a rh" style="left:1.5px;top:139.30px;width:16px;height:9.0px;line-height:9.0px;font-size:9.0px;transform-origin:0 7.47px;transform:scaleY(1.0)">13</div>
<div class="a" style="left:1.5px;top:148px;width:16px;height:1px;background:#d8d8d8"></div>
<div class="a rh" style="left:1.5px;top:150.43px;width:16px;height:9.0px;line-height:9.0px;font-size:9.0px;transform-origin:0 7.47px;transform:scaleY(1.0)">14</div>
<div class="a" style="left:1.5px;top:159px;width:16px;height:1px;background:#d8d8d8"></div>
<div class="a rh" style="left:1.5px;top:161.55px;width:16px;height:9.0px;line-height:9.0px;font-size:9.0px;transform-origin:0 7.47px;transform:scaleY(1.0)">15</div>
<div class="a" style="left:1.5px;top:171px;width:16px;height:1px;background:#d8d8d8"></div>
<div class="a rh" style="left:1.5px;top:172.68px;width:16px;height:9.0px;line-height:9.0px;font-size:9.0px;transform-origin:0 7.47px;transform:scaleY(1.0)">16</div>
<div class="a" style="left:1.5px;top:182px;width:16px;height:1px;background:#d8d8d8"></div>
<div class="a rh" style="left:1.5px;top:183.80px;width:16px;height:9.0px;line-height:9.0px;font-size:9.0px;transform-origin:0 7.47px;transform:scaleY(1.0)">17</div>
<div class="a" style="left:1.5px;top:193px;width:16px;height:1px;background:#d8d8d8"></div>
<div class="a rh" style="left:1.5px;top:194.93px;width:16px;height:9.0px;line-height:9.0px;font-size:9.0px;transform-origin:0 7.47px;transform:scaleY(1.0)">18</div>
<div class="a" style="left:1.5px;top:204px;width:16px;height:1px;background:#d8d8d8"></div>
<div class="a rh" style="left:1.5px;top:206.05px;width:16px;height:9.0px;line-height:9.0px;font-size:9.0px;transform-origin:0 7.47px;transform:scaleY(1.0)">19</div>
<div class="a" style="left:1.5px;top:215px;width:16px;height:1px;background:#d8d8d8"></div>
<div class="a rh" style="left:1.5px;top:217.18px;width:16px;height:9.0px;line-height:9.0px;font-size:9.0px;transform-origin:0 7.47px;transform:scaleY(1.0)">20</div>
<div class="a" style="left:1.5px;top:226px;width:16px;height:1px;background:#d8d8d8"></div>
<div class="a rh" style="left:1.5px;top:228.30px;width:16px;height:9.0px;line-height:9.0px;font-size:9.0px;transform-origin:0 7.47px;transform:scaleY(1.0)">21</div>
<div class="a" style="left:1.5px;top:237px;width:16px;height:1px;background:#d8d8d8"></div>
<div class="a rh" style="left:1.5px;top:239.43px;width:16px;height:9.0px;line-height:9.0px;font-size:9.0px;transform-origin:0 7.47px;transform:scaleY(1.0)">22</div>
<div class="a" style="left:1.5px;top:249px;width:16px;height:1px;background:#d8d8d8"></div>
<div class="a rh" style="left:1.5px;top:250.55px;width:16px;height:9.0px;line-height:9.0px;font-size:9.0px;transform-origin:0 7.47px;transform:scaleY(1.0)">23</div>
<div class="a" style="left:1.5px;top:260px;width:16px;height:1px;background:#d8d8d8"></div>
<div class="a rh" style="left:1.5px;top:261.68px;width:16px;height:9.0px;line-height:9.0px;font-size:9.0px;transform-origin:0 7.47px;transform:scaleY(1.0)">24</div>
<div class="a" style="left:1.5px;top:271px;width:16px;height:1px;background:#d8d8d8"></div>
<div class="a rh" style="left:1.5px;top:272.80px;width:16px;height:9.0px;line-height:9.0px;font-size:9.0px;transform-origin:0 7.47px;transform:scaleY(1.0)">25</div>
<div class="a" style="left:1.5px;top:282px;width:16px;height:1px;background:#d8d8d8"></div>
<div class="a rh" style="left:1.5px;top:283.93px;width:16px;height:9.0px;line-height:9.0px;font-size:9.0px;transform-origin:0 7.47px;transform:scaleY(1.0)">26</div>
<div class="a" style="left:1.5px;top:293px;width:16px;height:1px;background:#d8d8d8"></div>
<div class="a rh" style="left:1.5px;top:295.05px;width:16px;height:9.0px;line-height:9.0px;font-size:9.0px;transform-origin:0 7.47px;transform:scaleY(1.0)">27</div>
<div class="a" style="left:1.5px;top:304px;width:16px;height:1px;background:#d8d8d8"></div>
<div class="a rh" style="left:1.5px;top:306.18px;width:16px;height:9.0px;line-height:9.0px;font-size:9.0px;transform-origin:0 7.47px;transform:scaleY(1.0)">28</div>
<div class="a" style="left:1.5px;top:315px;width:16px;height:1px;background:#d8d8d8"></div>
<div class="a rh" style="left:1.5px;top:317.30px;width:16px;height:9.0px;line-height:9.0px;font-size:9.0px;transform-origin:0 7.47px;transform:scaleY(1.0)">29</div>
<div class="a" style="left:1.5px;top:326px;width:16px;height:1px;background:#d8d8d8"></div>
<div class="a rh" style="left:1.5px;top:328.43px;width:16px;height:9.0px;line-height:9.0px;font-size:9.0px;transform-origin:0 7.47px;transform:scaleY(1.0)">30</div>
<div class="a" style="left:1.5px;top:337px;width:16px;height:1px;background:#d8d8d8"></div>
<div class="a rh" style="left:1.5px;top:339.55px;width:16px;height:9.0px;line-height:9.0px;font-size:9.0px;transform-origin:0 7.47px;transform:scaleY(1.0)">31</div>
<div class="a" style="left:1.5px;top:349px;width:16px;height:1px;background:#d8d8d8"></div>
<div class="a rh" style="left:1.5px;top:350.68px;width:16px;height:9.0px;line-height:9.0px;font-size:9.0px;transform-origin:0 7.47px;transform:scaleY(1.0)">32</div>
<div class="a" style="left:1.5px;top:360px;width:16px;height:1px;background:#d8d8d8"></div>
<div class="a rh" style="left:1.5px;top:361.80px;width:16px;height:9.0px;line-height:9.0px;font-size:9.0px;transform-origin:0 7.47px;transform:scaleY(1.0)">33</div>
<div class="a" style="left:1.5px;top:371px;width:16px;height:1px;background:#d8d8d8"></div>
<div class="a rh" style="left:1.5px;top:372.93px;width:16px;height:9.0px;line-height:9.0px;font-size:9.0px;transform-origin:0 7.47px;transform:scaleY(1.0)">34</div>
<div class="a" style="left:1.5px;top:382px;width:16px;height:1px;background:#d8d8d8"></div>
<div class="a rh" style="left:1.5px;top:384.05px;width:16px;height:9.0px;line-height:9.0px;font-size:9.0px;transform-origin:0 7.47px;transform:scaleY(1.0)">35</div>
<div class="a" style="left:1.5px;top:393px;width:16px;height:1px;background:#d8d8d8"></div>
<div class="a rh" style="left:1.5px;top:395.18px;width:16px;height:9.0px;line-height:9.0px;font-size:9.0px;transform-origin:0 7.47px;transform:scaleY(1.0)">36</div>
<div class="a" style="left:1.5px;top:404px;width:16px;height:1px;background:#d8d8d8"></div>
<div class="a rh" style="left:1.5px;top:406.30px;width:16px;height:9.0px;line-height:9.0px;font-size:9.0px;transform-origin:0 7.47px;transform:scaleY(1.0)">37</div>
<div class="a" style="left:1.5px;top:415px;width:16px;height:1px;background:#d8d8d8"></div>
<div class="a rh" style="left:1.5px;top:417.43px;width:16px;height:9.0px;line-height:9.0px;font-size:9.0px;transform-origin:0 7.47px;transform:scaleY(1.0)">38</div>
<div class="a" style="left:1.5px;top:427px;width:16px;height:1px;background:#d8d8d8"></div>
<div class="a" style="left:17.5px;top:37.12px;width:495.5px;height:11.12px;background:#fb6a10"></div>
<div class="a" style="left:17.50px;top:26px;width:495.50px;height:1px;background:#474747"></div>
<div class="a" style="left:59.00px;top:26.00px;width:1px;height:11.12px;background:#474747"></div>
<div class="a" style="left:275.20px;top:26.00px;width:1px;height:11.12px;background:#474747"></div>
<div class="a" style="left:327.00px;top:26.00px;width:1px;height:11.12px;background:#474747"></div>
<div class="a" style="left:355.00px;top:26.00px;width:1px;height:11.12px;background:#474747"></div>
<div class="a" style="left:434.00px;top:26.00px;width:1px;height:11.12px;background:#474747"></div>
<div class="a" style="left:512.50px;top:26.00px;width:1px;height:11.12px;background:#474747"></div>
<div class="a" style="left:512.50px;top:48.25px;width:1px;height:11.12px;background:#474747"></div>
<div class="a" style="left:59.50px;top:59px;width:453.50px;height:1px;background:#474747"></div>
<div class="a" style="left:76.50px;top:59.38px;width:1px;height:111.25px;background:#474747"></div>
<div class="a" style="left:275.20px;top:59.38px;width:1px;height:111.25px;background:#474747"></div>
<div class="a" style="left:327.00px;top:59.38px;width:1px;height:111.25px;background:#474747"></div>
<div class="a" style="left:355.00px;top:59.38px;width:1px;height:111.25px;background:#474747"></div>
<div class="a" style="left:434.00px;top:59.38px;width:1px;height:111.25px;background:#474747"></div>
<div class="a" style="left:512.50px;top:59.38px;width:1px;height:111.25px;background:#474747"></div>
<div class="a" style="left:59.50px;top:171px;width:453.50px;height:1px;background:#474747"></div>
<div class="a" style="left:59.50px;top:182px;width:453.50px;height:1px;background:#474747"></div>
<div class="a" style="left:17.50px;top:193px;width:495.50px;height:1px;background:#474747"></div>
<div class="a" style="left:434.00px;top:170.62px;width:1px;height:22.25px;background:#474747"></div>
<div class="a" style="left:512.50px;top:170.62px;width:1px;height:22.25px;background:#474747"></div>
<div class="a" style="left:512.50px;top:192.88px;width:1px;height:11.12px;background:#474747"></div>
<div class="a" style="left:59.50px;top:204px;width:453.50px;height:1px;background:#474747"></div>
<div class="a" style="left:76.50px;top:204.00px;width:1px;height:89.00px;background:#474747"></div>
<div class="a" style="left:275.20px;top:204.00px;width:1px;height:89.00px;background:#474747"></div>
<div class="a" style="left:327.00px;top:204.00px;width:1px;height:89.00px;background:#474747"></div>
<div class="a" style="left:355.00px;top:204.00px;width:1px;height:89.00px;background:#474747"></div>
<div class="a" style="left:434.00px;top:204.00px;width:1px;height:89.00px;background:#474747"></div>
<div class="a" style="left:512.50px;top:204.00px;width:1px;height:89.00px;background:#474747"></div>
<div class="a" style="left:59.50px;top:293px;width:453.50px;height:1px;background:#474747"></div>
<div class="a" style="left:59.50px;top:304px;width:453.50px;height:1px;background:#474747"></div>
<div class="a" style="left:17.50px;top:315px;width:495.50px;height:1px;background:#474747"></div>
<div class="a" style="left:434.00px;top:293.00px;width:1px;height:22.25px;background:#474747"></div>
<div class="a" style="left:512.50px;top:293.00px;width:1px;height:22.25px;background:#474747"></div>
<div class="a" style="left:512.50px;top:315.25px;width:1px;height:11.12px;background:#474747"></div>
<div class="a" style="left:59.50px;top:326px;width:453.50px;height:1px;background:#474747"></div>
<div class="a" style="left:76.50px;top:326.38px;width:1px;height:55.62px;background:#474747"></div>
<div class="a" style="left:275.20px;top:326.38px;width:1px;height:55.62px;background:#474747"></div>
<div class="a" style="left:327.00px;top:326.38px;width:1px;height:55.62px;background:#474747"></div>
<div class="a" style="left:355.00px;top:326.38px;width:1px;height:55.62px;background:#474747"></div>
<div class="a" style="left:434.00px;top:326.38px;width:1px;height:55.62px;background:#474747"></div>
<div class="a" style="left:512.50px;top:326.38px;width:1px;height:55.62px;background:#474747"></div>
<div class="a" style="left:59.50px;top:382px;width:453.50px;height:1px;background:#474747"></div>
<div class="a" style="left:59.50px;top:393px;width:453.50px;height:1px;background:#474747"></div>
<div class="a" style="left:17.50px;top:404px;width:495.50px;height:1px;background:#474747"></div>
<div class="a" style="left:434.00px;top:382.00px;width:1px;height:22.25px;background:#474747"></div>
<div class="a" style="left:512.50px;top:382.00px;width:1px;height:22.25px;background:#474747"></div>
<div class="a" style="left:512.50px;top:404.25px;width:1px;height:11.12px;background:#474747"></div>
<div class="a" style="left:59.50px;top:415px;width:453.50px;height:1px;background:#474747"></div>
<div class="a" style="left:76.50px;top:415.38px;width:1px;height:29.62px;background:#474747"></div>
<div class="a" style="left:275.20px;top:415.38px;width:1px;height:29.62px;background:#474747"></div>
<div class="a" style="left:327.00px;top:415.38px;width:1px;height:29.62px;background:#474747"></div>
<div class="a" style="left:355.00px;top:415.38px;width:1px;height:29.62px;background:#474747"></div>
<div class="a" style="left:434.00px;top:415.38px;width:1px;height:29.62px;background:#474747"></div>
<div class="a" style="left:512.50px;top:415.38px;width:1px;height:29.62px;background:#474747"></div>
<div class="a" style="left:59.00px;top:26.00px;width:1px;height:419.00px;background:#474747"></div>
<div class="a" style="left:513.00px;top:37px;width:252.00px;height:1px;background:#c6c6c6"></div>
<div class="a c" style="top:2.99px;height:11.3px;line-height:11.3px;font-size:11.3px;color:#111;transform-origin:0 9.38px;transform:scaleY(1.15);font-weight:bold;left:-34.50px;width:600px;text-align:center;">ANALISA HARGA SATUAN PEKERJAAN</div>
<div class="a c" style="top:16.29px;height:9.4px;line-height:9.4px;font-size:9.4px;color:#111;transform-origin:0 7.81px;transform:scaleY(1.15);font-weight:bold;left:20.50px;">Kota</div>
<div class="a c" style="top:16.29px;height:9.4px;line-height:9.4px;font-size:9.4px;color:#111;transform-origin:0 7.81px;transform:scaleY(1.15);font-weight:bold;left:66.00px;">:</div>
<div class="a c" style="top:16.29px;height:9.4px;line-height:9.4px;font-size:9.4px;color:#111;transform-origin:0 7.81px;transform:scaleY(1.15);font-weight:bold;left:79.50px;">Bodetabek</div>
<div class="a c" style="top:27.42px;height:9.4px;line-height:9.4px;font-size:9.4px;color:#111;transform-origin:0 7.81px;transform:scaleY(1.15);font-weight:bold;left:-261.50px;width:600px;text-align:center;">No.</div>
<div class="a c" style="top:27.42px;height:9.4px;line-height:9.4px;font-size:9.4px;color:#111;transform-origin:0 7.81px;transform:scaleY(1.15);font-weight:bold;left:-132.40px;width:600px;text-align:center;">URAIAN</div>
<div class="a c" style="top:27.42px;height:9.4px;line-height:9.4px;font-size:9.4px;color:#111;transform-origin:0 7.81px;transform:scaleY(1.15);font-weight:bold;left:1.60px;width:600px;text-align:center;">KOEFISIEN</div>
<div class="a c" style="top:27.42px;height:9.4px;line-height:9.4px;font-size:9.4px;color:#111;transform-origin:0 7.81px;transform:scaleY(1.15);font-weight:bold;left:41.50px;width:600px;text-align:center;">SAT</div>
<div class="a c" style="top:27.42px;height:9.4px;line-height:9.4px;font-size:9.4px;color:#111;transform-origin:0 7.81px;transform:scaleY(1.15);font-weight:bold;left:95.00px;width:600px;text-align:center;">HARGA SATUAN</div>
<div class="a c" style="top:27.42px;height:9.4px;line-height:9.4px;font-size:9.4px;color:#111;transform-origin:0 7.81px;transform:scaleY(1.15);font-weight:bold;left:173.75px;width:600px;text-align:center;">JUMLAH (RP)</div>
<div class="a c" style="top:38.54px;height:9.4px;line-height:9.4px;font-size:9.4px;color:#7a1a05;transform-origin:0 7.81px;transform:scaleY(1.15);font-weight:bold;left:-261.50px;width:600px;text-align:center;">I</div>
<div class="a c" style="top:38.54px;height:9.4px;line-height:9.4px;font-size:9.4px;color:#7a1a05;transform-origin:0 7.81px;transform:scaleY(1.15);font-weight:bold;left:62.00px;">PEKERJAAN PERSIAPAN</div>
<div class="a c" style="top:49.67px;height:9.4px;line-height:9.4px;font-size:9.4px;color:#111;transform-origin:0 7.81px;transform:scaleY(1.15);font-weight:bold;left:-248.70px;width:300px;text-align:right;">1</div>
<div class="a c" style="top:49.67px;height:9.4px;line-height:9.4px;font-size:9.4px;color:#111;transform-origin:0 7.81px;transform:scaleY(1.15);font-weight:bold;left:62.00px;">1 M' PAGAR SENG GELOMBANG TINGGI : 2 M</div>
<div class="a c" style="top:62.26px;height:9.2px;line-height:9.2px;font-size:9.2px;color:#262626;transform-origin:0 7.64px;transform:scaleY(1.15);left:-231.75px;width:600px;text-align:center;">a</div>
<div class="a c" style="top:62.26px;height:9.2px;line-height:9.2px;font-size:9.2px;color:#262626;transform-origin:0 7.64px;transform:scaleY(1.15);left:79.50px;">Tiang Kayu Borneo 4/6</div>
<div class="a c" style="top:62.26px;height:9.2px;line-height:9.2px;font-size:9.2px;color:#262626;transform-origin:0 7.64px;transform:scaleY(1.15);left:23.00px;width:300px;text-align:right;">0.05</div>
<div class="a c" style="top:62.26px;height:9.2px;line-height:9.2px;font-size:9.2px;color:#262626;transform-origin:0 7.64px;transform:scaleY(1.15);left:41.50px;width:600px;text-align:center;">m3</div>
<div class="a c" style="top:62.26px;height:9.2px;line-height:9.2px;font-size:9.2px;color:#262626;transform-origin:0 7.64px;transform:scaleY(1.15);left:129.80px;width:300px;text-align:right;">3,600,000.00</div>
<div class="a c" style="top:62.26px;height:9.2px;line-height:9.2px;font-size:9.2px;color:#262626;transform-origin:0 7.64px;transform:scaleY(1.15);left:208.50px;width:300px;text-align:right;">180,000.00</div>
<div class="a c" style="top:73.38px;height:9.2px;line-height:9.2px;font-size:9.2px;color:#262626;transform-origin:0 7.64px;transform:scaleY(1.15);left:-231.75px;width:600px;text-align:center;">b</div>
<div class="a c" style="top:73.38px;height:9.2px;line-height:9.2px;font-size:9.2px;color:#262626;transform-origin:0 7.64px;transform:scaleY(1.15);left:79.50px;">Semen PC (abu-abu)</div>
<div class="a c" style="top:73.38px;height:9.2px;line-height:9.2px;font-size:9.2px;color:#262626;transform-origin:0 7.64px;transform:scaleY(1.15);left:23.00px;width:300px;text-align:right;">0.05</div>
<div class="a c" style="top:73.38px;height:9.2px;line-height:9.2px;font-size:9.2px;color:#262626;transform-origin:0 7.64px;transform:scaleY(1.15);left:41.50px;width:600px;text-align:center;">sak</div>
<div class="a c" style="top:73.38px;height:9.2px;line-height:9.2px;font-size:9.2px;color:#262626;transform-origin:0 7.64px;transform:scaleY(1.15);left:129.80px;width:300px;text-align:right;">62,000.00</div>
<div class="a c" style="top:73.38px;height:9.2px;line-height:9.2px;font-size:9.2px;color:#262626;transform-origin:0 7.64px;transform:scaleY(1.15);left:208.50px;width:300px;text-align:right;">3,100.00</div>
<div class="a c" style="top:84.51px;height:9.2px;line-height:9.2px;font-size:9.2px;color:#262626;transform-origin:0 7.64px;transform:scaleY(1.15);left:-231.75px;width:600px;text-align:center;">c</div>
<div class="a c" style="top:84.51px;height:9.2px;line-height:9.2px;font-size:9.2px;color:#262626;transform-origin:0 7.64px;transform:scaleY(1.15);left:79.50px;">Seng Gelombang</div>
<div class="a c" style="top:84.51px;height:9.2px;line-height:9.2px;font-size:9.2px;color:#262626;transform-origin:0 7.64px;transform:scaleY(1.15);left:23.00px;width:300px;text-align:right;">1.20</div>
<div class="a c" style="top:84.51px;height:9.2px;line-height:9.2px;font-size:9.2px;color:#262626;transform-origin:0 7.64px;transform:scaleY(1.15);left:41.50px;width:600px;text-align:center;">lbr</div>
<div class="a c" style="top:84.51px;height:9.2px;line-height:9.2px;font-size:9.2px;color:#262626;transform-origin:0 7.64px;transform:scaleY(1.15);left:129.80px;width:300px;text-align:right;">43,000.00</div>
<div class="a c" style="top:84.51px;height:9.2px;line-height:9.2px;font-size:9.2px;color:#262626;transform-origin:0 7.64px;transform:scaleY(1.15);left:208.50px;width:300px;text-align:right;">51,600.00</div>
<div class="a c" style="top:95.63px;height:9.2px;line-height:9.2px;font-size:9.2px;color:#262626;transform-origin:0 7.64px;transform:scaleY(1.15);left:-231.75px;width:600px;text-align:center;">d</div>
<div class="a c" style="top:95.63px;height:9.2px;line-height:9.2px;font-size:9.2px;color:#262626;transform-origin:0 7.64px;transform:scaleY(1.15);left:79.50px;">Pasir beton</div>
<div class="a c" style="top:95.63px;height:9.2px;line-height:9.2px;font-size:9.2px;color:#262626;transform-origin:0 7.64px;transform:scaleY(1.15);left:23.00px;width:300px;text-align:right;">0.01</div>
<div class="a c" style="top:95.63px;height:9.2px;line-height:9.2px;font-size:9.2px;color:#262626;transform-origin:0 7.64px;transform:scaleY(1.15);left:41.50px;width:600px;text-align:center;">m3</div>
<div class="a c" style="top:95.63px;height:9.2px;line-height:9.2px;font-size:9.2px;color:#262626;transform-origin:0 7.64px;transform:scaleY(1.15);left:129.80px;width:300px;text-align:right;">250,000.00</div>
<div class="a c" style="top:95.63px;height:9.2px;line-height:9.2px;font-size:9.2px;color:#262626;transform-origin:0 7.64px;transform:scaleY(1.15);left:208.50px;width:300px;text-align:right;">1,250.00</div>
<div class="a c" style="top:106.76px;height:9.2px;line-height:9.2px;font-size:9.2px;color:#262626;transform-origin:0 7.64px;transform:scaleY(1.15);left:-231.75px;width:600px;text-align:center;">e</div>
<div class="a c" style="top:106.76px;height:9.2px;line-height:9.2px;font-size:9.2px;color:#262626;transform-origin:0 7.64px;transform:scaleY(1.15);left:79.50px;">Splitz (batu pecah)</div>
<div class="a c" style="top:106.76px;height:9.2px;line-height:9.2px;font-size:9.2px;color:#262626;transform-origin:0 7.64px;transform:scaleY(1.15);left:23.00px;width:300px;text-align:right;">0.01</div>
<div class="a c" style="top:106.76px;height:9.2px;line-height:9.2px;font-size:9.2px;color:#262626;transform-origin:0 7.64px;transform:scaleY(1.15);left:41.50px;width:600px;text-align:center;">m3</div>
<div class="a c" style="top:106.76px;height:9.2px;line-height:9.2px;font-size:9.2px;color:#262626;transform-origin:0 7.64px;transform:scaleY(1.15);left:129.80px;width:300px;text-align:right;">178,000.00</div>
<div class="a c" style="top:106.76px;height:9.2px;line-height:9.2px;font-size:9.2px;color:#262626;transform-origin:0 7.64px;transform:scaleY(1.15);left:208.50px;width:300px;text-align:right;">1,602.00</div>
<div class="a c" style="top:117.88px;height:9.2px;line-height:9.2px;font-size:9.2px;color:#262626;transform-origin:0 7.64px;transform:scaleY(1.15);left:-231.75px;width:600px;text-align:center;">f</div>
<div class="a c" style="top:117.88px;height:9.2px;line-height:9.2px;font-size:9.2px;color:#262626;transform-origin:0 7.64px;transform:scaleY(1.15);left:79.50px;">Balok kayu borneo 4/6</div>
<div class="a c" style="top:117.88px;height:9.2px;line-height:9.2px;font-size:9.2px;color:#262626;transform-origin:0 7.64px;transform:scaleY(1.15);left:23.00px;width:300px;text-align:right;">0.05</div>
<div class="a c" style="top:117.88px;height:9.2px;line-height:9.2px;font-size:9.2px;color:#262626;transform-origin:0 7.64px;transform:scaleY(1.15);left:41.50px;width:600px;text-align:center;">m3</div>
<div class="a c" style="top:117.88px;height:9.2px;line-height:9.2px;font-size:9.2px;color:#262626;transform-origin:0 7.64px;transform:scaleY(1.15);left:129.80px;width:300px;text-align:right;">3,600,000.00</div>
<div class="a c" style="top:117.88px;height:9.2px;line-height:9.2px;font-size:9.2px;color:#262626;transform-origin:0 7.64px;transform:scaleY(1.15);left:208.50px;width:300px;text-align:right;">180,000.00</div>
<div class="a c" style="top:129.01px;height:9.2px;line-height:9.2px;font-size:9.2px;color:#262626;transform-origin:0 7.64px;transform:scaleY(1.15);left:-231.75px;width:600px;text-align:center;">g</div>
<div class="a c" style="top:129.01px;height:9.2px;line-height:9.2px;font-size:9.2px;color:#262626;transform-origin:0 7.64px;transform:scaleY(1.15);left:79.50px;">Paku 5 - 10 cm</div>
<div class="a c" style="top:129.01px;height:9.2px;line-height:9.2px;font-size:9.2px;color:#262626;transform-origin:0 7.64px;transform:scaleY(1.15);left:23.00px;width:300px;text-align:right;">0.06</div>
<div class="a c" style="top:129.01px;height:9.2px;line-height:9.2px;font-size:9.2px;color:#262626;transform-origin:0 7.64px;transform:scaleY(1.15);left:41.50px;width:600px;text-align:center;">kg</div>
<div class="a c" style="top:129.01px;height:9.2px;line-height:9.2px;font-size:9.2px;color:#262626;transform-origin:0 7.64px;transform:scaleY(1.15);left:129.80px;width:300px;text-align:right;">15,000.00</div>
<div class="a c" style="top:129.01px;height:9.2px;line-height:9.2px;font-size:9.2px;color:#262626;transform-origin:0 7.64px;transform:scaleY(1.15);left:208.50px;width:300px;text-align:right;">900.00</div>
<div class="a c" style="top:140.13px;height:9.2px;line-height:9.2px;font-size:9.2px;color:#262626;transform-origin:0 7.64px;transform:scaleY(1.15);left:-231.75px;width:600px;text-align:center;">h</div>
<div class="a c" style="top:140.13px;height:9.2px;line-height:9.2px;font-size:9.2px;color:#262626;transform-origin:0 7.64px;transform:scaleY(1.15);left:79.50px;">Meni Besi</div>
<div class="a c" style="top:140.13px;height:9.2px;line-height:9.2px;font-size:9.2px;color:#262626;transform-origin:0 7.64px;transform:scaleY(1.15);left:23.00px;width:300px;text-align:right;">0.45</div>
<div class="a c" style="top:140.13px;height:9.2px;line-height:9.2px;font-size:9.2px;color:#262626;transform-origin:0 7.64px;transform:scaleY(1.15);left:41.50px;width:600px;text-align:center;">kg</div>
<div class="a c" style="top:140.13px;height:9.2px;line-height:9.2px;font-size:9.2px;color:#262626;transform-origin:0 7.64px;transform:scaleY(1.15);left:129.80px;width:300px;text-align:right;">14,500.00</div>
<div class="a c" style="top:140.13px;height:9.2px;line-height:9.2px;font-size:9.2px;color:#262626;transform-origin:0 7.64px;transform:scaleY(1.15);left:208.50px;width:300px;text-align:right;">6,525.00</div>
<div class="a c" style="top:151.26px;height:9.2px;line-height:9.2px;font-size:9.2px;color:#262626;transform-origin:0 7.64px;transform:scaleY(1.15);left:-231.75px;width:600px;text-align:center;">i</div>
<div class="a c" style="top:151.26px;height:9.2px;line-height:9.2px;font-size:9.2px;color:#262626;transform-origin:0 7.64px;transform:scaleY(1.15);left:79.50px;">Tukang Kayu</div>
<div class="a c" style="top:151.26px;height:9.2px;line-height:9.2px;font-size:9.2px;color:#262626;transform-origin:0 7.64px;transform:scaleY(1.15);left:23.00px;width:300px;text-align:right;">0.20</div>
<div class="a c" style="top:151.26px;height:9.2px;line-height:9.2px;font-size:9.2px;color:#262626;transform-origin:0 7.64px;transform:scaleY(1.15);left:41.50px;width:600px;text-align:center;">org</div>
<div class="a c" style="top:151.26px;height:9.2px;line-height:9.2px;font-size:9.2px;color:#262626;transform-origin:0 7.64px;transform:scaleY(1.15);left:129.80px;width:300px;text-align:right;">80,000.00</div>
<div class="a c" style="top:151.26px;height:9.2px;line-height:9.2px;font-size:9.2px;color:#262626;transform-origin:0 7.64px;transform:scaleY(1.15);left:208.50px;width:300px;text-align:right;">16,000.00</div>
<div class="a c" style="top:162.38px;height:9.2px;line-height:9.2px;font-size:9.2px;color:#262626;transform-origin:0 7.64px;transform:scaleY(1.15);left:-231.75px;width:600px;text-align:center;">j</div>
<div class="a c" style="top:162.38px;height:9.2px;line-height:9.2px;font-size:9.2px;color:#262626;transform-origin:0 7.64px;transform:scaleY(1.15);left:79.50px;">Pembantu Tukang</div>
<div class="a c" style="top:162.38px;height:9.2px;line-height:9.2px;font-size:9.2px;color:#262626;transform-origin:0 7.64px;transform:scaleY(1.15);left:23.00px;width:300px;text-align:right;">0.10</div>
<div class="a c" style="top:162.38px;height:9.2px;line-height:9.2px;font-size:9.2px;color:#262626;transform-origin:0 7.64px;transform:scaleY(1.15);left:41.50px;width:600px;text-align:center;">org</div>
<div class="a c" style="top:162.38px;height:9.2px;line-height:9.2px;font-size:9.2px;color:#262626;transform-origin:0 7.64px;transform:scaleY(1.15);left:129.80px;width:300px;text-align:right;">65,000.00</div>
<div class="a c" style="top:162.38px;height:9.2px;line-height:9.2px;font-size:9.2px;color:#262626;transform-origin:0 7.64px;transform:scaleY(1.15);left:208.50px;width:300px;text-align:right;">6,500.00</div>
<div class="a c" style="top:173.51px;height:9.2px;line-height:9.2px;font-size:9.2px;color:#262626;transform-origin:0 7.64px;transform:scaleY(1.15);left:79.50px;">Jumlah</div>
<div class="a c" style="top:173.51px;height:9.2px;line-height:9.2px;font-size:9.2px;color:#262626;transform-origin:0 7.64px;transform:scaleY(1.15);left:208.50px;width:300px;text-align:right;">447,477.00</div>
<div class="a c" style="top:183.27px;height:9.4px;line-height:9.4px;font-size:9.4px;color:#111;transform-origin:0 7.81px;transform:scaleY(1.15);font-weight:bold;left:79.50px;">Dibulatkan</div>
<div class="a c" style="top:184.63px;height:9.2px;line-height:9.2px;font-size:9.2px;color:#262626;transform-origin:0 7.64px;transform:scaleY(1.15);left:208.50px;width:300px;text-align:right;">447,470.00</div>
<div class="a c" style="top:194.29px;height:9.4px;line-height:9.4px;font-size:9.4px;color:#111;transform-origin:0 7.81px;transform:scaleY(1.15);font-weight:bold;left:-248.70px;width:300px;text-align:right;">2</div>
<div class="a c" style="top:194.29px;height:9.4px;line-height:9.4px;font-size:9.4px;color:#111;transform-origin:0 7.81px;transform:scaleY(1.15);font-weight:bold;left:62.00px;">1 M' PAGAR&nbsp; KAWAT BERDURI TINGGI : 1,8 M</div>
<div class="a c" style="top:206.88px;height:9.2px;line-height:9.2px;font-size:9.2px;color:#262626;transform-origin:0 7.64px;transform:scaleY(1.15);left:-231.75px;width:600px;text-align:center;">a</div>
<div class="a c" style="top:206.88px;height:9.2px;line-height:9.2px;font-size:9.2px;color:#262626;transform-origin:0 7.64px;transform:scaleY(1.15);left:79.50px;">Tiang dari Kayu Borneo 4/6</div>
<div class="a c" style="top:206.88px;height:9.2px;line-height:9.2px;font-size:9.2px;color:#262626;transform-origin:0 7.64px;transform:scaleY(1.15);left:23.00px;width:300px;text-align:right;">0.05</div>
<div class="a c" style="top:206.88px;height:9.2px;line-height:9.2px;font-size:9.2px;color:#262626;transform-origin:0 7.64px;transform:scaleY(1.15);left:41.50px;width:600px;text-align:center;">m3</div>
<div class="a c" style="top:206.88px;height:9.2px;line-height:9.2px;font-size:9.2px;color:#262626;transform-origin:0 7.64px;transform:scaleY(1.15);left:129.80px;width:300px;text-align:right;">3,600,000.00</div>
<div class="a c" style="top:206.88px;height:9.2px;line-height:9.2px;font-size:9.2px;color:#262626;transform-origin:0 7.64px;transform:scaleY(1.15);left:208.50px;width:300px;text-align:right;">180,000.00</div>
<div class="a c" style="top:218.01px;height:9.2px;line-height:9.2px;font-size:9.2px;color:#262626;transform-origin:0 7.64px;transform:scaleY(1.15);left:-231.75px;width:600px;text-align:center;">b</div>
<div class="a c" style="top:218.01px;height:9.2px;line-height:9.2px;font-size:9.2px;color:#262626;transform-origin:0 7.64px;transform:scaleY(1.15);left:79.50px;">Semen PC (abu-abu)</div>
<div class="a c" style="top:218.01px;height:9.2px;line-height:9.2px;font-size:9.2px;color:#262626;transform-origin:0 7.64px;transform:scaleY(1.15);left:23.00px;width:300px;text-align:right;">0.04</div>
<div class="a c" style="top:218.01px;height:9.2px;line-height:9.2px;font-size:9.2px;color:#262626;transform-origin:0 7.64px;transform:scaleY(1.15);left:41.50px;width:600px;text-align:center;">sak</div>
<div class="a c" style="top:218.01px;height:9.2px;line-height:9.2px;font-size:9.2px;color:#262626;transform-origin:0 7.64px;transform:scaleY(1.15);left:129.80px;width:300px;text-align:right;">62,000.00</div>
<div class="a c" style="top:218.01px;height:9.2px;line-height:9.2px;font-size:9.2px;color:#262626;transform-origin:0 7.64px;transform:scaleY(1.15);left:208.50px;width:300px;text-align:right;">2,480.00</div>
<div class="a c" style="top:229.13px;height:9.2px;line-height:9.2px;font-size:9.2px;color:#262626;transform-origin:0 7.64px;transform:scaleY(1.15);left:-231.75px;width:600px;text-align:center;">c</div>
<div class="a c" style="top:229.13px;height:9.2px;line-height:9.2px;font-size:9.2px;color:#262626;transform-origin:0 7.64px;transform:scaleY(1.15);left:79.50px;">Kawat Duri</div>
<div class="a c" style="top:229.13px;height:9.2px;line-height:9.2px;font-size:9.2px;color:#262626;transform-origin:0 7.64px;transform:scaleY(1.15);left:23.00px;width:300px;text-align:right;">2.50</div>
<div class="a c" style="top:229.13px;height:9.2px;line-height:9.2px;font-size:9.2px;color:#262626;transform-origin:0 7.64px;transform:scaleY(1.15);left:41.50px;width:600px;text-align:center;">kg</div>
<div class="a c" style="top:229.13px;height:9.2px;line-height:9.2px;font-size:9.2px;color:#262626;transform-origin:0 7.64px;transform:scaleY(1.15);left:129.80px;width:300px;text-align:right;">225,000.00</div>
<div class="a c" style="top:229.13px;height:9.2px;line-height:9.2px;font-size:9.2px;color:#262626;transform-origin:0 7.64px;transform:scaleY(1.15);left:208.50px;width:300px;text-align:right;">562,500.00</div>
<div class="a c" style="top:240.26px;height:9.2px;line-height:9.2px;font-size:9.2px;color:#262626;transform-origin:0 7.64px;transform:scaleY(1.15);left:-231.75px;width:600px;text-align:center;">d</div>
<div class="a c" style="top:240.26px;height:9.2px;line-height:9.2px;font-size:9.2px;color:#262626;transform-origin:0 7.64px;transform:scaleY(1.15);left:79.50px;">Pasir beton</div>
<div class="a c" style="top:240.26px;height:9.2px;line-height:9.2px;font-size:9.2px;color:#262626;transform-origin:0 7.64px;transform:scaleY(1.15);left:23.00px;width:300px;text-align:right;">0.01</div>
<div class="a c" style="top:240.26px;height:9.2px;line-height:9.2px;font-size:9.2px;color:#262626;transform-origin:0 7.64px;transform:scaleY(1.15);left:41.50px;width:600px;text-align:center;">m3</div>
<div class="a c" style="top:240.26px;height:9.2px;line-height:9.2px;font-size:9.2px;color:#262626;transform-origin:0 7.64px;transform:scaleY(1.15);left:129.80px;width:300px;text-align:right;">250,000.00</div>
<div class="a c" style="top:240.26px;height:9.2px;line-height:9.2px;font-size:9.2px;color:#262626;transform-origin:0 7.64px;transform:scaleY(1.15);left:208.50px;width:300px;text-align:right;">1,250.00</div>
<div class="a c" style="top:251.38px;height:9.2px;line-height:9.2px;font-size:9.2px;color:#262626;transform-origin:0 7.64px;transform:scaleY(1.15);left:-231.75px;width:600px;text-align:center;">e</div>
<div class="a c" style="top:251.38px;height:9.2px;line-height:9.2px;font-size:9.2px;color:#262626;transform-origin:0 7.64px;transform:scaleY(1.15);left:79.50px;">Splitz (batu pecah)</div>
<div class="a c" style="top:251.38px;height:9.2px;line-height:9.2px;font-size:9.2px;color:#262626;transform-origin:0 7.64px;transform:scaleY(1.15);left:23.00px;width:300px;text-align:right;">0.01</div>
<div class="a c" style="top:251.38px;height:9.2px;line-height:9.2px;font-size:9.2px;color:#262626;transform-origin:0 7.64px;transform:scaleY(1.15);left:41.50px;width:600px;text-align:center;">m3</div>
<div class="a c" style="top:251.38px;height:9.2px;line-height:9.2px;font-size:9.2px;color:#262626;transform-origin:0 7.64px;transform:scaleY(1.15);left:129.80px;width:300px;text-align:right;">178,000.00</div>
<div class="a c" style="top:251.38px;height:9.2px;line-height:9.2px;font-size:9.2px;color:#262626;transform-origin:0 7.64px;transform:scaleY(1.15);left:208.50px;width:300px;text-align:right;">1,602.00</div>
<div class="a c" style="top:262.51px;height:9.2px;line-height:9.2px;font-size:9.2px;color:#262626;transform-origin:0 7.64px;transform:scaleY(1.15);left:-231.75px;width:600px;text-align:center;">f</div>
<div class="a c" style="top:262.51px;height:9.2px;line-height:9.2px;font-size:9.2px;color:#262626;transform-origin:0 7.64px;transform:scaleY(1.15);left:79.50px;">Paku 5 - 10 cm</div>
<div class="a c" style="top:262.51px;height:9.2px;line-height:9.2px;font-size:9.2px;color:#262626;transform-origin:0 7.64px;transform:scaleY(1.15);left:23.00px;width:300px;text-align:right;">0.06</div>
<div class="a c" style="top:262.51px;height:9.2px;line-height:9.2px;font-size:9.2px;color:#262626;transform-origin:0 7.64px;transform:scaleY(1.15);left:41.50px;width:600px;text-align:center;">kg</div>
<div class="a c" style="top:262.51px;height:9.2px;line-height:9.2px;font-size:9.2px;color:#262626;transform-origin:0 7.64px;transform:scaleY(1.15);left:129.80px;width:300px;text-align:right;">15,000.00</div>
<div class="a c" style="top:262.51px;height:9.2px;line-height:9.2px;font-size:9.2px;color:#262626;transform-origin:0 7.64px;transform:scaleY(1.15);left:208.50px;width:300px;text-align:right;">900.00</div>
<div class="a c" style="top:273.63px;height:9.2px;line-height:9.2px;font-size:9.2px;color:#262626;transform-origin:0 7.64px;transform:scaleY(1.15);left:-231.75px;width:600px;text-align:center;">g</div>
<div class="a c" style="top:273.63px;height:9.2px;line-height:9.2px;font-size:9.2px;color:#262626;transform-origin:0 7.64px;transform:scaleY(1.15);left:79.50px;">Tukang Kayu</div>
<div class="a c" style="top:273.63px;height:9.2px;line-height:9.2px;font-size:9.2px;color:#262626;transform-origin:0 7.64px;transform:scaleY(1.15);left:23.00px;width:300px;text-align:right;">0.20</div>
<div class="a c" style="top:273.63px;height:9.2px;line-height:9.2px;font-size:9.2px;color:#262626;transform-origin:0 7.64px;transform:scaleY(1.15);left:41.50px;width:600px;text-align:center;">org</div>
<div class="a c" style="top:273.63px;height:9.2px;line-height:9.2px;font-size:9.2px;color:#262626;transform-origin:0 7.64px;transform:scaleY(1.15);left:129.80px;width:300px;text-align:right;">80,000.00</div>
<div class="a c" style="top:273.63px;height:9.2px;line-height:9.2px;font-size:9.2px;color:#262626;transform-origin:0 7.64px;transform:scaleY(1.15);left:208.50px;width:300px;text-align:right;">16,000.00</div>
<div class="a c" style="top:284.76px;height:9.2px;line-height:9.2px;font-size:9.2px;color:#262626;transform-origin:0 7.64px;transform:scaleY(1.15);left:-231.75px;width:600px;text-align:center;">h</div>
<div class="a c" style="top:284.76px;height:9.2px;line-height:9.2px;font-size:9.2px;color:#262626;transform-origin:0 7.64px;transform:scaleY(1.15);left:79.50px;">Pembantu Tukang</div>
<div class="a c" style="top:284.76px;height:9.2px;line-height:9.2px;font-size:9.2px;color:#262626;transform-origin:0 7.64px;transform:scaleY(1.15);left:23.00px;width:300px;text-align:right;">0.30</div>
<div class="a c" style="top:284.76px;height:9.2px;line-height:9.2px;font-size:9.2px;color:#262626;transform-origin:0 7.64px;transform:scaleY(1.15);left:41.50px;width:600px;text-align:center;">org</div>
<div class="a c" style="top:284.76px;height:9.2px;line-height:9.2px;font-size:9.2px;color:#262626;transform-origin:0 7.64px;transform:scaleY(1.15);left:129.80px;width:300px;text-align:right;">65,000.00</div>
<div class="a c" style="top:284.76px;height:9.2px;line-height:9.2px;font-size:9.2px;color:#262626;transform-origin:0 7.64px;transform:scaleY(1.15);left:208.50px;width:300px;text-align:right;">19,500.00</div>
<div class="a c" style="top:295.88px;height:9.2px;line-height:9.2px;font-size:9.2px;color:#262626;transform-origin:0 7.64px;transform:scaleY(1.15);left:79.50px;">Jumlah</div>
<div class="a c" style="top:295.88px;height:9.2px;line-height:9.2px;font-size:9.2px;color:#262626;transform-origin:0 7.64px;transform:scaleY(1.15);left:208.50px;width:300px;text-align:right;">784,232.00</div>
<div class="a c" style="top:305.64px;height:9.4px;line-height:9.4px;font-size:9.4px;color:#111;transform-origin:0 7.81px;transform:scaleY(1.15);font-weight:bold;left:79.50px;">Dibulatkan</div>
<div class="a c" style="top:307.01px;height:9.2px;line-height:9.2px;font-size:9.2px;color:#262626;transform-origin:0 7.64px;transform:scaleY(1.15);left:208.50px;width:300px;text-align:right;">784,230.00</div>
<div class="a c" style="top:316.67px;height:9.4px;line-height:9.4px;font-size:9.4px;color:#111;transform-origin:0 7.81px;transform:scaleY(1.15);font-weight:bold;left:-248.70px;width:300px;text-align:right;">3</div>
<div class="a c" style="top:316.67px;height:9.4px;line-height:9.4px;font-size:9.4px;color:#111;transform-origin:0 7.81px;transform:scaleY(1.15);font-weight:bold;left:62.00px;">1 M' PENGUKURAN &amp; PEMASANGAN BOWPLANK</div>
<div class="a c" style="top:329.26px;height:9.2px;line-height:9.2px;font-size:9.2px;color:#262626;transform-origin:0 7.64px;transform:scaleY(1.15);left:-231.75px;width:600px;text-align:center;">a</div>
<div class="a c" style="top:329.26px;height:9.2px;line-height:9.2px;font-size:9.2px;color:#262626;transform-origin:0 7.64px;transform:scaleY(1.15);left:79.50px;">Kayu kaso 5/7 borneo</div>
<div class="a c" style="top:329.26px;height:9.2px;line-height:9.2px;font-size:9.2px;color:#262626;transform-origin:0 7.64px;transform:scaleY(1.15);left:23.00px;width:300px;text-align:right;">0.02</div>
<div class="a c" style="top:329.26px;height:9.2px;line-height:9.2px;font-size:9.2px;color:#262626;transform-origin:0 7.64px;transform:scaleY(1.15);left:41.50px;width:600px;text-align:center;">m3</div>
<div class="a c" style="top:329.26px;height:9.2px;line-height:9.2px;font-size:9.2px;color:#262626;transform-origin:0 7.64px;transform:scaleY(1.15);left:129.80px;width:300px;text-align:right;">3,600,000.00</div>
<div class="a c" style="top:329.26px;height:9.2px;line-height:9.2px;font-size:9.2px;color:#262626;transform-origin:0 7.64px;transform:scaleY(1.15);left:208.50px;width:300px;text-align:right;">72,000.00</div>
<div class="a c" style="top:340.38px;height:9.2px;line-height:9.2px;font-size:9.2px;color:#262626;transform-origin:0 7.64px;transform:scaleY(1.15);left:-231.75px;width:600px;text-align:center;">b</div>
<div class="a c" style="top:340.38px;height:9.2px;line-height:9.2px;font-size:9.2px;color:#262626;transform-origin:0 7.64px;transform:scaleY(1.15);left:79.50px;">Paku 5 - 10 cm</div>
<div class="a c" style="top:340.38px;height:9.2px;line-height:9.2px;font-size:9.2px;color:#262626;transform-origin:0 7.64px;transform:scaleY(1.15);left:23.00px;width:300px;text-align:right;">0.02</div>
<div class="a c" style="top:340.38px;height:9.2px;line-height:9.2px;font-size:9.2px;color:#262626;transform-origin:0 7.64px;transform:scaleY(1.15);left:41.50px;width:600px;text-align:center;">kg</div>
<div class="a c" style="top:340.38px;height:9.2px;line-height:9.2px;font-size:9.2px;color:#262626;transform-origin:0 7.64px;transform:scaleY(1.15);left:129.80px;width:300px;text-align:right;">15,000.00</div>
<div class="a c" style="top:340.38px;height:9.2px;line-height:9.2px;font-size:9.2px;color:#262626;transform-origin:0 7.64px;transform:scaleY(1.15);left:208.50px;width:300px;text-align:right;">300.00</div>
<div class="a c" style="top:351.51px;height:9.2px;line-height:9.2px;font-size:9.2px;color:#262626;transform-origin:0 7.64px;transform:scaleY(1.15);left:-231.75px;width:600px;text-align:center;">c</div>
<div class="a c" style="top:351.51px;height:9.2px;line-height:9.2px;font-size:9.2px;color:#262626;transform-origin:0 7.64px;transform:scaleY(1.15);left:79.50px;">Papan&nbsp; Papan kayu terentang 2/20</div>
<div class="a c" style="top:351.51px;height:9.2px;line-height:9.2px;font-size:9.2px;color:#262626;transform-origin:0 7.64px;transform:scaleY(1.15);left:23.00px;width:300px;text-align:right;">0.00</div>
<div class="a c" style="top:351.51px;height:9.2px;line-height:9.2px;font-size:9.2px;color:#262626;transform-origin:0 7.64px;transform:scaleY(1.15);left:41.50px;width:600px;text-align:center;">m3</div>
<div class="a c" style="top:351.51px;height:9.2px;line-height:9.2px;font-size:9.2px;color:#262626;transform-origin:0 7.64px;transform:scaleY(1.15);left:129.80px;width:300px;text-align:right;">2,400,000.00</div>
<div class="a c" style="top:351.51px;height:9.2px;line-height:9.2px;font-size:9.2px;color:#262626;transform-origin:0 7.64px;transform:scaleY(1.15);left:208.50px;width:300px;text-align:right;">9,600.00</div>
<div class="a c" style="top:362.63px;height:9.2px;line-height:9.2px;font-size:9.2px;color:#262626;transform-origin:0 7.64px;transform:scaleY(1.15);left:-231.75px;width:600px;text-align:center;">d</div>
<div class="a c" style="top:362.63px;height:9.2px;line-height:9.2px;font-size:9.2px;color:#262626;transform-origin:0 7.64px;transform:scaleY(1.15);left:79.50px;">Tukang Kayu</div>
<div class="a c" style="top:362.63px;height:9.2px;line-height:9.2px;font-size:9.2px;color:#262626;transform-origin:0 7.64px;transform:scaleY(1.15);left:23.00px;width:300px;text-align:right;">0.10</div>
<div class="a c" style="top:362.63px;height:9.2px;line-height:9.2px;font-size:9.2px;color:#262626;transform-origin:0 7.64px;transform:scaleY(1.15);left:41.50px;width:600px;text-align:center;">org</div>
<div class="a c" style="top:362.63px;height:9.2px;line-height:9.2px;font-size:9.2px;color:#262626;transform-origin:0 7.64px;transform:scaleY(1.15);left:129.80px;width:300px;text-align:right;">80,000.00</div>
<div class="a c" style="top:362.63px;height:9.2px;line-height:9.2px;font-size:9.2px;color:#262626;transform-origin:0 7.64px;transform:scaleY(1.15);left:208.50px;width:300px;text-align:right;">8,000.00</div>
<div class="a c" style="top:373.76px;height:9.2px;line-height:9.2px;font-size:9.2px;color:#262626;transform-origin:0 7.64px;transform:scaleY(1.15);left:-231.75px;width:600px;text-align:center;">e</div>
<div class="a c" style="top:373.76px;height:9.2px;line-height:9.2px;font-size:9.2px;color:#262626;transform-origin:0 7.64px;transform:scaleY(1.15);left:79.50px;">Pembantu Tukang</div>
<div class="a c" style="top:373.76px;height:9.2px;line-height:9.2px;font-size:9.2px;color:#262626;transform-origin:0 7.64px;transform:scaleY(1.15);left:23.00px;width:300px;text-align:right;">0.10</div>
<div class="a c" style="top:373.76px;height:9.2px;line-height:9.2px;font-size:9.2px;color:#262626;transform-origin:0 7.64px;transform:scaleY(1.15);left:41.50px;width:600px;text-align:center;">org</div>
<div class="a c" style="top:373.76px;height:9.2px;line-height:9.2px;font-size:9.2px;color:#262626;transform-origin:0 7.64px;transform:scaleY(1.15);left:129.80px;width:300px;text-align:right;">65,000.00</div>
<div class="a c" style="top:373.76px;height:9.2px;line-height:9.2px;font-size:9.2px;color:#262626;transform-origin:0 7.64px;transform:scaleY(1.15);left:208.50px;width:300px;text-align:right;">6,500.00</div>
<div class="a c" style="top:384.88px;height:9.2px;line-height:9.2px;font-size:9.2px;color:#262626;transform-origin:0 7.64px;transform:scaleY(1.15);left:79.50px;">Jumlah</div>
<div class="a c" style="top:384.88px;height:9.2px;line-height:9.2px;font-size:9.2px;color:#262626;transform-origin:0 7.64px;transform:scaleY(1.15);left:208.50px;width:300px;text-align:right;">96,400.00</div>
<div class="a c" style="top:394.64px;height:9.4px;line-height:9.4px;font-size:9.4px;color:#111;transform-origin:0 7.81px;transform:scaleY(1.15);font-weight:bold;left:79.50px;">Dibulatkan</div>
<div class="a c" style="top:396.01px;height:9.2px;line-height:9.2px;font-size:9.2px;color:#262626;transform-origin:0 7.64px;transform:scaleY(1.15);left:208.50px;width:300px;text-align:right;">96,400.00</div>
<div class="a c" style="top:405.67px;height:9.4px;line-height:9.4px;font-size:9.4px;color:#111;transform-origin:0 7.81px;transform:scaleY(1.15);font-weight:bold;left:-248.70px;width:300px;text-align:right;">4</div>
<div class="a c" style="top:405.67px;height:9.4px;line-height:9.4px;font-size:9.4px;color:#111;transform-origin:0 7.81px;transform:scaleY(1.15);font-weight:bold;left:62.00px;">1 m2 PEMBUATAN KANTOR DIREKSI</div>
<div class="a c" style="top:418.26px;height:9.2px;line-height:9.2px;font-size:9.2px;color:#262626;transform-origin:0 7.64px;transform:scaleY(1.15);left:-231.75px;width:600px;text-align:center;">a</div>
<div class="a c" style="top:418.26px;height:9.2px;line-height:9.2px;font-size:9.2px;color:#262626;transform-origin:0 7.64px;transform:scaleY(1.15);left:79.50px;">Kayu kaso 5/7 borneo</div>
<div class="a c" style="top:418.26px;height:9.2px;line-height:9.2px;font-size:9.2px;color:#262626;transform-origin:0 7.64px;transform:scaleY(1.15);left:23.00px;width:300px;text-align:right;">0.02</div>
<div class="a c" style="top:418.26px;height:9.2px;line-height:9.2px;font-size:9.2px;color:#262626;transform-origin:0 7.64px;transform:scaleY(1.15);left:41.50px;width:600px;text-align:center;">m3</div>
<div class="a c" style="top:418.26px;height:9.2px;line-height:9.2px;font-size:9.2px;color:#262626;transform-origin:0 7.64px;transform:scaleY(1.15);left:129.80px;width:300px;text-align:right;">3,600,000.00</div>
<div class="a c" style="top:418.26px;height:9.2px;line-height:9.2px;font-size:9.2px;color:#262626;transform-origin:0 7.64px;transform:scaleY(1.15);left:208.50px;width:300px;text-align:right;">72,000.00</div>
</div>
<div class="a" style="left:0;top:47px;width:1.3px;height:563px;background:#6a9079"></div><div class="a" style="left:1.3px;top:47px;width:1.2px;height:563px;background:#dbe8e0"></div>
</body></html>
